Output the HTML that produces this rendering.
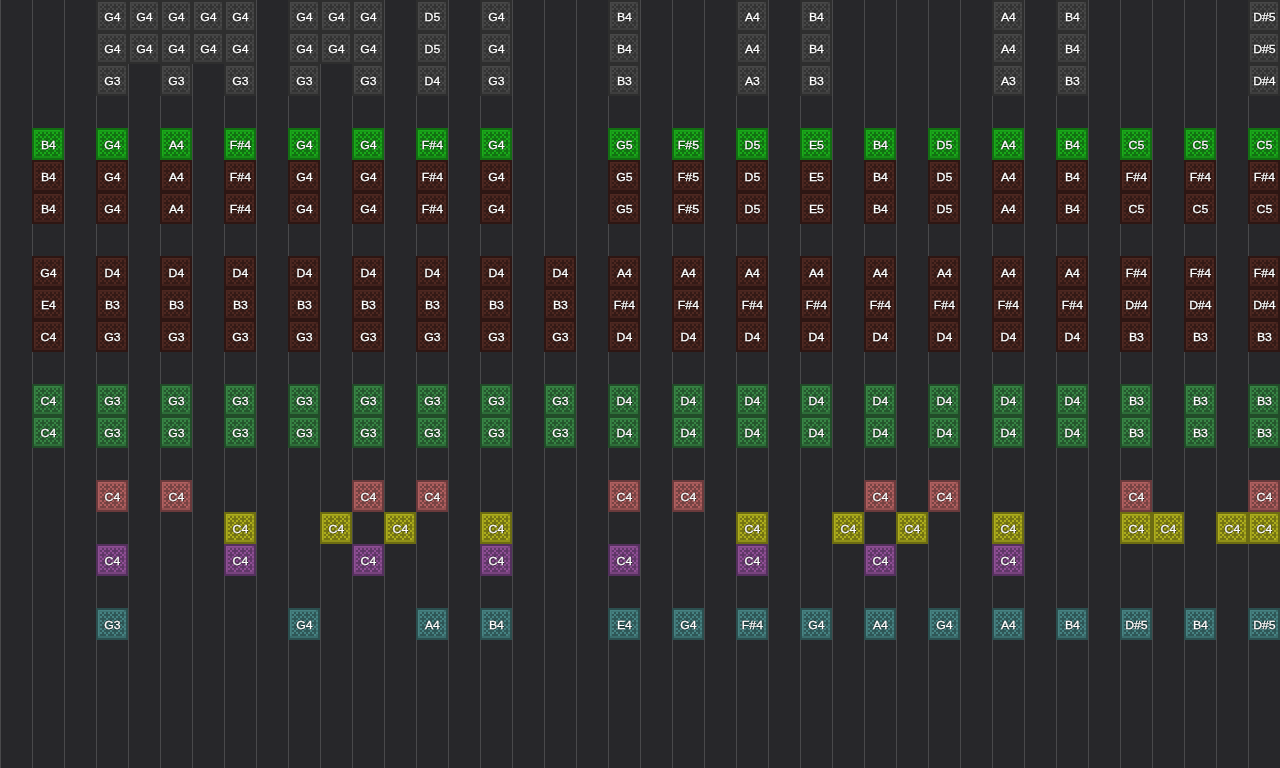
<!DOCTYPE html>
<html><head><meta charset="utf-8"><style>
html,body{margin:0;padding:0;width:1280px;height:768px;overflow:hidden;background:#27272a}
#w{position:relative;width:1280px;height:768px}
.t{position:absolute;width:32px;height:32px;line-height:32px;text-align:center;font-family:"Liberation Sans",sans-serif;font-size:11.8px;font-weight:normal;color:#fff;-webkit-text-stroke:0.3px #fff;text-shadow:0 0 1px #000,0 0 2px #000;padding-top:1px;box-sizing:border-box;transform:translate(0.4px,0.4px) scaleX(1.04);will-change:transform}
</style></head><body><div id="w">
<svg width="1280" height="768" viewBox="0 0 1280 768" shape-rendering="crispEdges" style="position:absolute;left:0;top:0"><defs><pattern id="t-gray" x="4" y="4" width="8" height="8" patternUnits="userSpaceOnUse"><rect width="8" height="8" fill="#484848"/><rect x="2" y="0" width="2" height="2" fill="#333333"/><rect x="6" y="0" width="2" height="2" fill="#333333"/><rect x="0" y="2" width="2" height="2" fill="#333333"/><rect x="4" y="2" width="2" height="2" fill="#333333"/><rect x="6" y="2" width="2" height="2" fill="#333333"/><rect x="2" y="4" width="2" height="2" fill="#333333"/><rect x="6" y="4" width="2" height="2" fill="#333333"/><rect x="0" y="6" width="2" height="2" fill="#333333"/><rect x="2" y="6" width="2" height="2" fill="#333333"/><rect x="4" y="6" width="2" height="2" fill="#333333"/></pattern><pattern id="r-gray" x="4" y="4" width="8" height="8" patternUnits="userSpaceOnUse"><rect width="8" height="8" fill="#484848"/><rect x="2" y="0" width="2" height="2" fill="#3e3e3e"/><rect x="6" y="0" width="2" height="2" fill="#3e3e3e"/><rect x="0" y="2" width="2" height="2" fill="#3e3e3e"/><rect x="4" y="2" width="2" height="2" fill="#3e3e3e"/><rect x="6" y="2" width="2" height="2" fill="#3e3e3e"/><rect x="2" y="4" width="2" height="2" fill="#3e3e3e"/><rect x="6" y="4" width="2" height="2" fill="#3e3e3e"/><rect x="0" y="6" width="2" height="2" fill="#3e3e3e"/><rect x="2" y="6" width="2" height="2" fill="#3e3e3e"/><rect x="4" y="6" width="2" height="2" fill="#3e3e3e"/></pattern><pattern id="t-green" x="4" y="4" width="8" height="8" patternUnits="userSpaceOnUse"><rect width="8" height="8" fill="#1aa91a"/><rect x="2" y="0" width="2" height="2" fill="#127212"/><rect x="6" y="0" width="2" height="2" fill="#127212"/><rect x="0" y="2" width="2" height="2" fill="#127212"/><rect x="4" y="2" width="2" height="2" fill="#127212"/><rect x="6" y="2" width="2" height="2" fill="#127212"/><rect x="2" y="4" width="2" height="2" fill="#127212"/><rect x="6" y="4" width="2" height="2" fill="#127212"/><rect x="0" y="6" width="2" height="2" fill="#127212"/><rect x="2" y="6" width="2" height="2" fill="#127212"/><rect x="4" y="6" width="2" height="2" fill="#127212"/></pattern><pattern id="r-green" x="4" y="4" width="8" height="8" patternUnits="userSpaceOnUse"><rect width="8" height="8" fill="#1aa91a"/><rect x="2" y="0" width="2" height="2" fill="#168e16"/><rect x="6" y="0" width="2" height="2" fill="#168e16"/><rect x="0" y="2" width="2" height="2" fill="#168e16"/><rect x="4" y="2" width="2" height="2" fill="#168e16"/><rect x="6" y="2" width="2" height="2" fill="#168e16"/><rect x="2" y="4" width="2" height="2" fill="#168e16"/><rect x="6" y="4" width="2" height="2" fill="#168e16"/><rect x="0" y="6" width="2" height="2" fill="#168e16"/><rect x="2" y="6" width="2" height="2" fill="#168e16"/><rect x="4" y="6" width="2" height="2" fill="#168e16"/></pattern><pattern id="t-brown" x="4" y="4" width="8" height="8" patternUnits="userSpaceOnUse"><rect width="8" height="8" fill="#4e2821"/><rect x="2" y="0" width="2" height="2" fill="#341a16"/><rect x="6" y="0" width="2" height="2" fill="#341a16"/><rect x="0" y="2" width="2" height="2" fill="#341a16"/><rect x="4" y="2" width="2" height="2" fill="#341a16"/><rect x="6" y="2" width="2" height="2" fill="#341a16"/><rect x="2" y="4" width="2" height="2" fill="#341a16"/><rect x="6" y="4" width="2" height="2" fill="#341a16"/><rect x="0" y="6" width="2" height="2" fill="#341a16"/><rect x="2" y="6" width="2" height="2" fill="#341a16"/><rect x="4" y="6" width="2" height="2" fill="#341a16"/></pattern><pattern id="r-brown" x="4" y="4" width="8" height="8" patternUnits="userSpaceOnUse"><rect width="8" height="8" fill="#4e2821"/><rect x="2" y="0" width="2" height="2" fill="#41211c"/><rect x="6" y="0" width="2" height="2" fill="#41211c"/><rect x="0" y="2" width="2" height="2" fill="#41211c"/><rect x="4" y="2" width="2" height="2" fill="#41211c"/><rect x="6" y="2" width="2" height="2" fill="#41211c"/><rect x="2" y="4" width="2" height="2" fill="#41211c"/><rect x="6" y="4" width="2" height="2" fill="#41211c"/><rect x="0" y="6" width="2" height="2" fill="#41211c"/><rect x="2" y="6" width="2" height="2" fill="#41211c"/><rect x="4" y="6" width="2" height="2" fill="#41211c"/></pattern><pattern id="t-dgreen" x="4" y="4" width="8" height="8" patternUnits="userSpaceOnUse"><rect width="8" height="8" fill="#388545"/><rect x="2" y="0" width="2" height="2" fill="#25572d"/><rect x="6" y="0" width="2" height="2" fill="#25572d"/><rect x="0" y="2" width="2" height="2" fill="#25572d"/><rect x="4" y="2" width="2" height="2" fill="#25572d"/><rect x="6" y="2" width="2" height="2" fill="#25572d"/><rect x="2" y="4" width="2" height="2" fill="#25572d"/><rect x="6" y="4" width="2" height="2" fill="#25572d"/><rect x="0" y="6" width="2" height="2" fill="#25572d"/><rect x="2" y="6" width="2" height="2" fill="#25572d"/><rect x="4" y="6" width="2" height="2" fill="#25572d"/></pattern><pattern id="r-dgreen" x="4" y="4" width="8" height="8" patternUnits="userSpaceOnUse"><rect width="8" height="8" fill="#388545"/><rect x="2" y="0" width="2" height="2" fill="#2e6e39"/><rect x="6" y="0" width="2" height="2" fill="#2e6e39"/><rect x="0" y="2" width="2" height="2" fill="#2e6e39"/><rect x="4" y="2" width="2" height="2" fill="#2e6e39"/><rect x="6" y="2" width="2" height="2" fill="#2e6e39"/><rect x="2" y="4" width="2" height="2" fill="#2e6e39"/><rect x="6" y="4" width="2" height="2" fill="#2e6e39"/><rect x="0" y="6" width="2" height="2" fill="#2e6e39"/><rect x="2" y="6" width="2" height="2" fill="#2e6e39"/><rect x="4" y="6" width="2" height="2" fill="#2e6e39"/></pattern><pattern id="t-pink" x="4" y="4" width="8" height="8" patternUnits="userSpaceOnUse"><rect width="8" height="8" fill="#b05f5f"/><rect x="2" y="0" width="2" height="2" fill="#774343"/><rect x="6" y="0" width="2" height="2" fill="#774343"/><rect x="0" y="2" width="2" height="2" fill="#774343"/><rect x="4" y="2" width="2" height="2" fill="#774343"/><rect x="6" y="2" width="2" height="2" fill="#774343"/><rect x="2" y="4" width="2" height="2" fill="#774343"/><rect x="6" y="4" width="2" height="2" fill="#774343"/><rect x="0" y="6" width="2" height="2" fill="#774343"/><rect x="2" y="6" width="2" height="2" fill="#774343"/><rect x="4" y="6" width="2" height="2" fill="#774343"/></pattern><pattern id="r-pink" x="4" y="4" width="8" height="8" patternUnits="userSpaceOnUse"><rect width="8" height="8" fill="#b05f5f"/><rect x="2" y="0" width="2" height="2" fill="#945151"/><rect x="6" y="0" width="2" height="2" fill="#945151"/><rect x="0" y="2" width="2" height="2" fill="#945151"/><rect x="4" y="2" width="2" height="2" fill="#945151"/><rect x="6" y="2" width="2" height="2" fill="#945151"/><rect x="2" y="4" width="2" height="2" fill="#945151"/><rect x="6" y="4" width="2" height="2" fill="#945151"/><rect x="0" y="6" width="2" height="2" fill="#945151"/><rect x="2" y="6" width="2" height="2" fill="#945151"/><rect x="4" y="6" width="2" height="2" fill="#945151"/></pattern><pattern id="t-yellow" x="4" y="4" width="8" height="8" patternUnits="userSpaceOnUse"><rect width="8" height="8" fill="#adad1c"/><rect x="2" y="0" width="2" height="2" fill="#757513"/><rect x="6" y="0" width="2" height="2" fill="#757513"/><rect x="0" y="2" width="2" height="2" fill="#757513"/><rect x="4" y="2" width="2" height="2" fill="#757513"/><rect x="6" y="2" width="2" height="2" fill="#757513"/><rect x="2" y="4" width="2" height="2" fill="#757513"/><rect x="6" y="4" width="2" height="2" fill="#757513"/><rect x="0" y="6" width="2" height="2" fill="#757513"/><rect x="2" y="6" width="2" height="2" fill="#757513"/><rect x="4" y="6" width="2" height="2" fill="#757513"/></pattern><pattern id="r-yellow" x="4" y="4" width="8" height="8" patternUnits="userSpaceOnUse"><rect width="8" height="8" fill="#adad1c"/><rect x="2" y="0" width="2" height="2" fill="#919118"/><rect x="6" y="0" width="2" height="2" fill="#919118"/><rect x="0" y="2" width="2" height="2" fill="#919118"/><rect x="4" y="2" width="2" height="2" fill="#919118"/><rect x="6" y="2" width="2" height="2" fill="#919118"/><rect x="2" y="4" width="2" height="2" fill="#919118"/><rect x="6" y="4" width="2" height="2" fill="#919118"/><rect x="0" y="6" width="2" height="2" fill="#919118"/><rect x="2" y="6" width="2" height="2" fill="#919118"/><rect x="4" y="6" width="2" height="2" fill="#919118"/></pattern><pattern id="t-purple" x="4" y="4" width="8" height="8" patternUnits="userSpaceOnUse"><rect width="8" height="8" fill="#8f4f95"/><rect x="2" y="0" width="2" height="2" fill="#603768"/><rect x="6" y="0" width="2" height="2" fill="#603768"/><rect x="0" y="2" width="2" height="2" fill="#603768"/><rect x="4" y="2" width="2" height="2" fill="#603768"/><rect x="6" y="2" width="2" height="2" fill="#603768"/><rect x="2" y="4" width="2" height="2" fill="#603768"/><rect x="6" y="4" width="2" height="2" fill="#603768"/><rect x="0" y="6" width="2" height="2" fill="#603768"/><rect x="2" y="6" width="2" height="2" fill="#603768"/><rect x="4" y="6" width="2" height="2" fill="#603768"/></pattern><pattern id="r-purple" x="4" y="4" width="8" height="8" patternUnits="userSpaceOnUse"><rect width="8" height="8" fill="#8f4f95"/><rect x="2" y="0" width="2" height="2" fill="#78437e"/><rect x="6" y="0" width="2" height="2" fill="#78437e"/><rect x="0" y="2" width="2" height="2" fill="#78437e"/><rect x="4" y="2" width="2" height="2" fill="#78437e"/><rect x="6" y="2" width="2" height="2" fill="#78437e"/><rect x="2" y="4" width="2" height="2" fill="#78437e"/><rect x="6" y="4" width="2" height="2" fill="#78437e"/><rect x="0" y="6" width="2" height="2" fill="#78437e"/><rect x="2" y="6" width="2" height="2" fill="#78437e"/><rect x="4" y="6" width="2" height="2" fill="#78437e"/></pattern><pattern id="t-teal" x="4" y="4" width="8" height="8" patternUnits="userSpaceOnUse"><rect width="8" height="8" fill="#468282"/><rect x="2" y="0" width="2" height="2" fill="#2f5757"/><rect x="6" y="0" width="2" height="2" fill="#2f5757"/><rect x="0" y="2" width="2" height="2" fill="#2f5757"/><rect x="4" y="2" width="2" height="2" fill="#2f5757"/><rect x="6" y="2" width="2" height="2" fill="#2f5757"/><rect x="2" y="4" width="2" height="2" fill="#2f5757"/><rect x="6" y="4" width="2" height="2" fill="#2f5757"/><rect x="0" y="6" width="2" height="2" fill="#2f5757"/><rect x="2" y="6" width="2" height="2" fill="#2f5757"/><rect x="4" y="6" width="2" height="2" fill="#2f5757"/></pattern><pattern id="r-teal" x="4" y="4" width="8" height="8" patternUnits="userSpaceOnUse"><rect width="8" height="8" fill="#468282"/><rect x="2" y="0" width="2" height="2" fill="#3a6c6c"/><rect x="6" y="0" width="2" height="2" fill="#3a6c6c"/><rect x="0" y="2" width="2" height="2" fill="#3a6c6c"/><rect x="4" y="2" width="2" height="2" fill="#3a6c6c"/><rect x="6" y="2" width="2" height="2" fill="#3a6c6c"/><rect x="2" y="4" width="2" height="2" fill="#3a6c6c"/><rect x="6" y="4" width="2" height="2" fill="#3a6c6c"/><rect x="0" y="6" width="2" height="2" fill="#3a6c6c"/><rect x="2" y="6" width="2" height="2" fill="#3a6c6c"/><rect x="4" y="6" width="2" height="2" fill="#3a6c6c"/></pattern></defs><rect width="1280" height="768" fill="#27272a"/><rect x="0" y="0" width="1" height="768" fill="#49494b"/><rect x="32" y="0" width="1" height="768" fill="#49494b"/><rect x="64" y="0" width="1" height="768" fill="#49494b"/><rect x="96" y="0" width="1" height="768" fill="#49494b"/><rect x="128" y="0" width="1" height="768" fill="#49494b"/><rect x="160" y="0" width="1" height="768" fill="#49494b"/><rect x="192" y="0" width="1" height="768" fill="#49494b"/><rect x="224" y="0" width="1" height="768" fill="#49494b"/><rect x="256" y="0" width="1" height="768" fill="#49494b"/><rect x="288" y="0" width="1" height="768" fill="#49494b"/><rect x="320" y="0" width="1" height="768" fill="#49494b"/><rect x="352" y="0" width="1" height="768" fill="#49494b"/><rect x="384" y="0" width="1" height="768" fill="#49494b"/><rect x="416" y="0" width="1" height="768" fill="#49494b"/><rect x="448" y="0" width="1" height="768" fill="#49494b"/><rect x="480" y="0" width="1" height="768" fill="#49494b"/><rect x="512" y="0" width="1" height="768" fill="#49494b"/><rect x="544" y="0" width="1" height="768" fill="#49494b"/><rect x="576" y="0" width="1" height="768" fill="#49494b"/><rect x="608" y="0" width="1" height="768" fill="#49494b"/><rect x="640" y="0" width="1" height="768" fill="#49494b"/><rect x="672" y="0" width="1" height="768" fill="#49494b"/><rect x="704" y="0" width="1" height="768" fill="#49494b"/><rect x="736" y="0" width="1" height="768" fill="#49494b"/><rect x="768" y="0" width="1" height="768" fill="#49494b"/><rect x="800" y="0" width="1" height="768" fill="#49494b"/><rect x="832" y="0" width="1" height="768" fill="#49494b"/><rect x="864" y="0" width="1" height="768" fill="#49494b"/><rect x="896" y="0" width="1" height="768" fill="#49494b"/><rect x="928" y="0" width="1" height="768" fill="#49494b"/><rect x="960" y="0" width="1" height="768" fill="#49494b"/><rect x="992" y="0" width="1" height="768" fill="#49494b"/><rect x="1024" y="0" width="1" height="768" fill="#49494b"/><rect x="1056" y="0" width="1" height="768" fill="#49494b"/><rect x="1088" y="0" width="1" height="768" fill="#49494b"/><rect x="1120" y="0" width="1" height="768" fill="#49494b"/><rect x="1152" y="0" width="1" height="768" fill="#49494b"/><rect x="1184" y="0" width="1" height="768" fill="#49494b"/><rect x="1216" y="0" width="1" height="768" fill="#49494b"/><rect x="1248" y="0" width="1" height="768" fill="#49494b"/><rect x="96" y="0" width="32" height="32" fill="#2e2e2e"/><rect x="98" y="2" width="28" height="28" fill="#3e3e3e"/><rect x="98" y="2" width="1" height="26" fill="#484848"/><rect x="98" y="2" width="26" height="1" fill="#484848"/><rect x="99" y="3" width="1" height="25" fill="#424242"/><rect x="99" y="3" width="25" height="1" fill="#424242"/><rect x="100" y="4" width="24" height="24" fill="url(#t-gray)"/><rect x="124" y="4" width="2" height="24" fill="url(#r-gray)"/><rect x="128" y="0" width="32" height="32" fill="#2e2e2e"/><rect x="130" y="2" width="28" height="28" fill="#3e3e3e"/><rect x="130" y="2" width="1" height="26" fill="#484848"/><rect x="130" y="2" width="26" height="1" fill="#484848"/><rect x="131" y="3" width="1" height="25" fill="#424242"/><rect x="131" y="3" width="25" height="1" fill="#424242"/><rect x="132" y="4" width="24" height="24" fill="url(#t-gray)"/><rect x="156" y="4" width="2" height="24" fill="url(#r-gray)"/><rect x="160" y="0" width="32" height="32" fill="#2e2e2e"/><rect x="162" y="2" width="28" height="28" fill="#3e3e3e"/><rect x="162" y="2" width="1" height="26" fill="#484848"/><rect x="162" y="2" width="26" height="1" fill="#484848"/><rect x="163" y="3" width="1" height="25" fill="#424242"/><rect x="163" y="3" width="25" height="1" fill="#424242"/><rect x="164" y="4" width="24" height="24" fill="url(#t-gray)"/><rect x="188" y="4" width="2" height="24" fill="url(#r-gray)"/><rect x="192" y="0" width="32" height="32" fill="#2e2e2e"/><rect x="194" y="2" width="28" height="28" fill="#3e3e3e"/><rect x="194" y="2" width="1" height="26" fill="#484848"/><rect x="194" y="2" width="26" height="1" fill="#484848"/><rect x="195" y="3" width="1" height="25" fill="#424242"/><rect x="195" y="3" width="25" height="1" fill="#424242"/><rect x="196" y="4" width="24" height="24" fill="url(#t-gray)"/><rect x="220" y="4" width="2" height="24" fill="url(#r-gray)"/><rect x="224" y="0" width="32" height="32" fill="#2e2e2e"/><rect x="226" y="2" width="28" height="28" fill="#3e3e3e"/><rect x="226" y="2" width="1" height="26" fill="#484848"/><rect x="226" y="2" width="26" height="1" fill="#484848"/><rect x="227" y="3" width="1" height="25" fill="#424242"/><rect x="227" y="3" width="25" height="1" fill="#424242"/><rect x="228" y="4" width="24" height="24" fill="url(#t-gray)"/><rect x="252" y="4" width="2" height="24" fill="url(#r-gray)"/><rect x="288" y="0" width="32" height="32" fill="#2e2e2e"/><rect x="290" y="2" width="28" height="28" fill="#3e3e3e"/><rect x="290" y="2" width="1" height="26" fill="#484848"/><rect x="290" y="2" width="26" height="1" fill="#484848"/><rect x="291" y="3" width="1" height="25" fill="#424242"/><rect x="291" y="3" width="25" height="1" fill="#424242"/><rect x="292" y="4" width="24" height="24" fill="url(#t-gray)"/><rect x="316" y="4" width="2" height="24" fill="url(#r-gray)"/><rect x="320" y="0" width="32" height="32" fill="#2e2e2e"/><rect x="322" y="2" width="28" height="28" fill="#3e3e3e"/><rect x="322" y="2" width="1" height="26" fill="#484848"/><rect x="322" y="2" width="26" height="1" fill="#484848"/><rect x="323" y="3" width="1" height="25" fill="#424242"/><rect x="323" y="3" width="25" height="1" fill="#424242"/><rect x="324" y="4" width="24" height="24" fill="url(#t-gray)"/><rect x="348" y="4" width="2" height="24" fill="url(#r-gray)"/><rect x="352" y="0" width="32" height="32" fill="#2e2e2e"/><rect x="354" y="2" width="28" height="28" fill="#3e3e3e"/><rect x="354" y="2" width="1" height="26" fill="#484848"/><rect x="354" y="2" width="26" height="1" fill="#484848"/><rect x="355" y="3" width="1" height="25" fill="#424242"/><rect x="355" y="3" width="25" height="1" fill="#424242"/><rect x="356" y="4" width="24" height="24" fill="url(#t-gray)"/><rect x="380" y="4" width="2" height="24" fill="url(#r-gray)"/><rect x="416" y="0" width="32" height="32" fill="#2e2e2e"/><rect x="418" y="2" width="28" height="28" fill="#3e3e3e"/><rect x="418" y="2" width="1" height="26" fill="#484848"/><rect x="418" y="2" width="26" height="1" fill="#484848"/><rect x="419" y="3" width="1" height="25" fill="#424242"/><rect x="419" y="3" width="25" height="1" fill="#424242"/><rect x="420" y="4" width="24" height="24" fill="url(#t-gray)"/><rect x="444" y="4" width="2" height="24" fill="url(#r-gray)"/><rect x="480" y="0" width="32" height="32" fill="#2e2e2e"/><rect x="482" y="2" width="28" height="28" fill="#3e3e3e"/><rect x="482" y="2" width="1" height="26" fill="#484848"/><rect x="482" y="2" width="26" height="1" fill="#484848"/><rect x="483" y="3" width="1" height="25" fill="#424242"/><rect x="483" y="3" width="25" height="1" fill="#424242"/><rect x="484" y="4" width="24" height="24" fill="url(#t-gray)"/><rect x="508" y="4" width="2" height="24" fill="url(#r-gray)"/><rect x="608" y="0" width="32" height="32" fill="#2e2e2e"/><rect x="610" y="2" width="28" height="28" fill="#3e3e3e"/><rect x="610" y="2" width="1" height="26" fill="#484848"/><rect x="610" y="2" width="26" height="1" fill="#484848"/><rect x="611" y="3" width="1" height="25" fill="#424242"/><rect x="611" y="3" width="25" height="1" fill="#424242"/><rect x="612" y="4" width="24" height="24" fill="url(#t-gray)"/><rect x="636" y="4" width="2" height="24" fill="url(#r-gray)"/><rect x="736" y="0" width="32" height="32" fill="#2e2e2e"/><rect x="738" y="2" width="28" height="28" fill="#3e3e3e"/><rect x="738" y="2" width="1" height="26" fill="#484848"/><rect x="738" y="2" width="26" height="1" fill="#484848"/><rect x="739" y="3" width="1" height="25" fill="#424242"/><rect x="739" y="3" width="25" height="1" fill="#424242"/><rect x="740" y="4" width="24" height="24" fill="url(#t-gray)"/><rect x="764" y="4" width="2" height="24" fill="url(#r-gray)"/><rect x="800" y="0" width="32" height="32" fill="#2e2e2e"/><rect x="802" y="2" width="28" height="28" fill="#3e3e3e"/><rect x="802" y="2" width="1" height="26" fill="#484848"/><rect x="802" y="2" width="26" height="1" fill="#484848"/><rect x="803" y="3" width="1" height="25" fill="#424242"/><rect x="803" y="3" width="25" height="1" fill="#424242"/><rect x="804" y="4" width="24" height="24" fill="url(#t-gray)"/><rect x="828" y="4" width="2" height="24" fill="url(#r-gray)"/><rect x="992" y="0" width="32" height="32" fill="#2e2e2e"/><rect x="994" y="2" width="28" height="28" fill="#3e3e3e"/><rect x="994" y="2" width="1" height="26" fill="#484848"/><rect x="994" y="2" width="26" height="1" fill="#484848"/><rect x="995" y="3" width="1" height="25" fill="#424242"/><rect x="995" y="3" width="25" height="1" fill="#424242"/><rect x="996" y="4" width="24" height="24" fill="url(#t-gray)"/><rect x="1020" y="4" width="2" height="24" fill="url(#r-gray)"/><rect x="1056" y="0" width="32" height="32" fill="#2e2e2e"/><rect x="1058" y="2" width="28" height="28" fill="#3e3e3e"/><rect x="1058" y="2" width="1" height="26" fill="#484848"/><rect x="1058" y="2" width="26" height="1" fill="#484848"/><rect x="1059" y="3" width="1" height="25" fill="#424242"/><rect x="1059" y="3" width="25" height="1" fill="#424242"/><rect x="1060" y="4" width="24" height="24" fill="url(#t-gray)"/><rect x="1084" y="4" width="2" height="24" fill="url(#r-gray)"/><rect x="1248" y="0" width="32" height="32" fill="#2e2e2e"/><rect x="1250" y="2" width="28" height="28" fill="#3e3e3e"/><rect x="1250" y="2" width="1" height="26" fill="#484848"/><rect x="1250" y="2" width="26" height="1" fill="#484848"/><rect x="1251" y="3" width="1" height="25" fill="#424242"/><rect x="1251" y="3" width="25" height="1" fill="#424242"/><rect x="1252" y="4" width="24" height="24" fill="url(#t-gray)"/><rect x="1276" y="4" width="2" height="24" fill="url(#r-gray)"/><rect x="96" y="32" width="32" height="32" fill="#2e2e2e"/><rect x="98" y="34" width="28" height="28" fill="#3e3e3e"/><rect x="98" y="34" width="1" height="26" fill="#484848"/><rect x="98" y="34" width="26" height="1" fill="#484848"/><rect x="99" y="35" width="1" height="25" fill="#424242"/><rect x="99" y="35" width="25" height="1" fill="#424242"/><rect x="100" y="36" width="24" height="24" fill="url(#t-gray)"/><rect x="124" y="36" width="2" height="24" fill="url(#r-gray)"/><rect x="128" y="32" width="32" height="32" fill="#2e2e2e"/><rect x="130" y="34" width="28" height="28" fill="#3e3e3e"/><rect x="130" y="34" width="1" height="26" fill="#484848"/><rect x="130" y="34" width="26" height="1" fill="#484848"/><rect x="131" y="35" width="1" height="25" fill="#424242"/><rect x="131" y="35" width="25" height="1" fill="#424242"/><rect x="132" y="36" width="24" height="24" fill="url(#t-gray)"/><rect x="156" y="36" width="2" height="24" fill="url(#r-gray)"/><rect x="160" y="32" width="32" height="32" fill="#2e2e2e"/><rect x="162" y="34" width="28" height="28" fill="#3e3e3e"/><rect x="162" y="34" width="1" height="26" fill="#484848"/><rect x="162" y="34" width="26" height="1" fill="#484848"/><rect x="163" y="35" width="1" height="25" fill="#424242"/><rect x="163" y="35" width="25" height="1" fill="#424242"/><rect x="164" y="36" width="24" height="24" fill="url(#t-gray)"/><rect x="188" y="36" width="2" height="24" fill="url(#r-gray)"/><rect x="192" y="32" width="32" height="32" fill="#2e2e2e"/><rect x="194" y="34" width="28" height="28" fill="#3e3e3e"/><rect x="194" y="34" width="1" height="26" fill="#484848"/><rect x="194" y="34" width="26" height="1" fill="#484848"/><rect x="195" y="35" width="1" height="25" fill="#424242"/><rect x="195" y="35" width="25" height="1" fill="#424242"/><rect x="196" y="36" width="24" height="24" fill="url(#t-gray)"/><rect x="220" y="36" width="2" height="24" fill="url(#r-gray)"/><rect x="224" y="32" width="32" height="32" fill="#2e2e2e"/><rect x="226" y="34" width="28" height="28" fill="#3e3e3e"/><rect x="226" y="34" width="1" height="26" fill="#484848"/><rect x="226" y="34" width="26" height="1" fill="#484848"/><rect x="227" y="35" width="1" height="25" fill="#424242"/><rect x="227" y="35" width="25" height="1" fill="#424242"/><rect x="228" y="36" width="24" height="24" fill="url(#t-gray)"/><rect x="252" y="36" width="2" height="24" fill="url(#r-gray)"/><rect x="288" y="32" width="32" height="32" fill="#2e2e2e"/><rect x="290" y="34" width="28" height="28" fill="#3e3e3e"/><rect x="290" y="34" width="1" height="26" fill="#484848"/><rect x="290" y="34" width="26" height="1" fill="#484848"/><rect x="291" y="35" width="1" height="25" fill="#424242"/><rect x="291" y="35" width="25" height="1" fill="#424242"/><rect x="292" y="36" width="24" height="24" fill="url(#t-gray)"/><rect x="316" y="36" width="2" height="24" fill="url(#r-gray)"/><rect x="320" y="32" width="32" height="32" fill="#2e2e2e"/><rect x="322" y="34" width="28" height="28" fill="#3e3e3e"/><rect x="322" y="34" width="1" height="26" fill="#484848"/><rect x="322" y="34" width="26" height="1" fill="#484848"/><rect x="323" y="35" width="1" height="25" fill="#424242"/><rect x="323" y="35" width="25" height="1" fill="#424242"/><rect x="324" y="36" width="24" height="24" fill="url(#t-gray)"/><rect x="348" y="36" width="2" height="24" fill="url(#r-gray)"/><rect x="352" y="32" width="32" height="32" fill="#2e2e2e"/><rect x="354" y="34" width="28" height="28" fill="#3e3e3e"/><rect x="354" y="34" width="1" height="26" fill="#484848"/><rect x="354" y="34" width="26" height="1" fill="#484848"/><rect x="355" y="35" width="1" height="25" fill="#424242"/><rect x="355" y="35" width="25" height="1" fill="#424242"/><rect x="356" y="36" width="24" height="24" fill="url(#t-gray)"/><rect x="380" y="36" width="2" height="24" fill="url(#r-gray)"/><rect x="416" y="32" width="32" height="32" fill="#2e2e2e"/><rect x="418" y="34" width="28" height="28" fill="#3e3e3e"/><rect x="418" y="34" width="1" height="26" fill="#484848"/><rect x="418" y="34" width="26" height="1" fill="#484848"/><rect x="419" y="35" width="1" height="25" fill="#424242"/><rect x="419" y="35" width="25" height="1" fill="#424242"/><rect x="420" y="36" width="24" height="24" fill="url(#t-gray)"/><rect x="444" y="36" width="2" height="24" fill="url(#r-gray)"/><rect x="480" y="32" width="32" height="32" fill="#2e2e2e"/><rect x="482" y="34" width="28" height="28" fill="#3e3e3e"/><rect x="482" y="34" width="1" height="26" fill="#484848"/><rect x="482" y="34" width="26" height="1" fill="#484848"/><rect x="483" y="35" width="1" height="25" fill="#424242"/><rect x="483" y="35" width="25" height="1" fill="#424242"/><rect x="484" y="36" width="24" height="24" fill="url(#t-gray)"/><rect x="508" y="36" width="2" height="24" fill="url(#r-gray)"/><rect x="608" y="32" width="32" height="32" fill="#2e2e2e"/><rect x="610" y="34" width="28" height="28" fill="#3e3e3e"/><rect x="610" y="34" width="1" height="26" fill="#484848"/><rect x="610" y="34" width="26" height="1" fill="#484848"/><rect x="611" y="35" width="1" height="25" fill="#424242"/><rect x="611" y="35" width="25" height="1" fill="#424242"/><rect x="612" y="36" width="24" height="24" fill="url(#t-gray)"/><rect x="636" y="36" width="2" height="24" fill="url(#r-gray)"/><rect x="736" y="32" width="32" height="32" fill="#2e2e2e"/><rect x="738" y="34" width="28" height="28" fill="#3e3e3e"/><rect x="738" y="34" width="1" height="26" fill="#484848"/><rect x="738" y="34" width="26" height="1" fill="#484848"/><rect x="739" y="35" width="1" height="25" fill="#424242"/><rect x="739" y="35" width="25" height="1" fill="#424242"/><rect x="740" y="36" width="24" height="24" fill="url(#t-gray)"/><rect x="764" y="36" width="2" height="24" fill="url(#r-gray)"/><rect x="800" y="32" width="32" height="32" fill="#2e2e2e"/><rect x="802" y="34" width="28" height="28" fill="#3e3e3e"/><rect x="802" y="34" width="1" height="26" fill="#484848"/><rect x="802" y="34" width="26" height="1" fill="#484848"/><rect x="803" y="35" width="1" height="25" fill="#424242"/><rect x="803" y="35" width="25" height="1" fill="#424242"/><rect x="804" y="36" width="24" height="24" fill="url(#t-gray)"/><rect x="828" y="36" width="2" height="24" fill="url(#r-gray)"/><rect x="992" y="32" width="32" height="32" fill="#2e2e2e"/><rect x="994" y="34" width="28" height="28" fill="#3e3e3e"/><rect x="994" y="34" width="1" height="26" fill="#484848"/><rect x="994" y="34" width="26" height="1" fill="#484848"/><rect x="995" y="35" width="1" height="25" fill="#424242"/><rect x="995" y="35" width="25" height="1" fill="#424242"/><rect x="996" y="36" width="24" height="24" fill="url(#t-gray)"/><rect x="1020" y="36" width="2" height="24" fill="url(#r-gray)"/><rect x="1056" y="32" width="32" height="32" fill="#2e2e2e"/><rect x="1058" y="34" width="28" height="28" fill="#3e3e3e"/><rect x="1058" y="34" width="1" height="26" fill="#484848"/><rect x="1058" y="34" width="26" height="1" fill="#484848"/><rect x="1059" y="35" width="1" height="25" fill="#424242"/><rect x="1059" y="35" width="25" height="1" fill="#424242"/><rect x="1060" y="36" width="24" height="24" fill="url(#t-gray)"/><rect x="1084" y="36" width="2" height="24" fill="url(#r-gray)"/><rect x="1248" y="32" width="32" height="32" fill="#2e2e2e"/><rect x="1250" y="34" width="28" height="28" fill="#3e3e3e"/><rect x="1250" y="34" width="1" height="26" fill="#484848"/><rect x="1250" y="34" width="26" height="1" fill="#484848"/><rect x="1251" y="35" width="1" height="25" fill="#424242"/><rect x="1251" y="35" width="25" height="1" fill="#424242"/><rect x="1252" y="36" width="24" height="24" fill="url(#t-gray)"/><rect x="1276" y="36" width="2" height="24" fill="url(#r-gray)"/><rect x="96" y="64" width="32" height="32" fill="#2e2e2e"/><rect x="98" y="66" width="28" height="28" fill="#3e3e3e"/><rect x="98" y="66" width="1" height="26" fill="#484848"/><rect x="98" y="66" width="26" height="1" fill="#484848"/><rect x="99" y="67" width="1" height="25" fill="#424242"/><rect x="99" y="67" width="25" height="1" fill="#424242"/><rect x="100" y="68" width="24" height="24" fill="url(#t-gray)"/><rect x="124" y="68" width="2" height="24" fill="url(#r-gray)"/><rect x="160" y="64" width="32" height="32" fill="#2e2e2e"/><rect x="162" y="66" width="28" height="28" fill="#3e3e3e"/><rect x="162" y="66" width="1" height="26" fill="#484848"/><rect x="162" y="66" width="26" height="1" fill="#484848"/><rect x="163" y="67" width="1" height="25" fill="#424242"/><rect x="163" y="67" width="25" height="1" fill="#424242"/><rect x="164" y="68" width="24" height="24" fill="url(#t-gray)"/><rect x="188" y="68" width="2" height="24" fill="url(#r-gray)"/><rect x="224" y="64" width="32" height="32" fill="#2e2e2e"/><rect x="226" y="66" width="28" height="28" fill="#3e3e3e"/><rect x="226" y="66" width="1" height="26" fill="#484848"/><rect x="226" y="66" width="26" height="1" fill="#484848"/><rect x="227" y="67" width="1" height="25" fill="#424242"/><rect x="227" y="67" width="25" height="1" fill="#424242"/><rect x="228" y="68" width="24" height="24" fill="url(#t-gray)"/><rect x="252" y="68" width="2" height="24" fill="url(#r-gray)"/><rect x="288" y="64" width="32" height="32" fill="#2e2e2e"/><rect x="290" y="66" width="28" height="28" fill="#3e3e3e"/><rect x="290" y="66" width="1" height="26" fill="#484848"/><rect x="290" y="66" width="26" height="1" fill="#484848"/><rect x="291" y="67" width="1" height="25" fill="#424242"/><rect x="291" y="67" width="25" height="1" fill="#424242"/><rect x="292" y="68" width="24" height="24" fill="url(#t-gray)"/><rect x="316" y="68" width="2" height="24" fill="url(#r-gray)"/><rect x="352" y="64" width="32" height="32" fill="#2e2e2e"/><rect x="354" y="66" width="28" height="28" fill="#3e3e3e"/><rect x="354" y="66" width="1" height="26" fill="#484848"/><rect x="354" y="66" width="26" height="1" fill="#484848"/><rect x="355" y="67" width="1" height="25" fill="#424242"/><rect x="355" y="67" width="25" height="1" fill="#424242"/><rect x="356" y="68" width="24" height="24" fill="url(#t-gray)"/><rect x="380" y="68" width="2" height="24" fill="url(#r-gray)"/><rect x="416" y="64" width="32" height="32" fill="#2e2e2e"/><rect x="418" y="66" width="28" height="28" fill="#3e3e3e"/><rect x="418" y="66" width="1" height="26" fill="#484848"/><rect x="418" y="66" width="26" height="1" fill="#484848"/><rect x="419" y="67" width="1" height="25" fill="#424242"/><rect x="419" y="67" width="25" height="1" fill="#424242"/><rect x="420" y="68" width="24" height="24" fill="url(#t-gray)"/><rect x="444" y="68" width="2" height="24" fill="url(#r-gray)"/><rect x="480" y="64" width="32" height="32" fill="#2e2e2e"/><rect x="482" y="66" width="28" height="28" fill="#3e3e3e"/><rect x="482" y="66" width="1" height="26" fill="#484848"/><rect x="482" y="66" width="26" height="1" fill="#484848"/><rect x="483" y="67" width="1" height="25" fill="#424242"/><rect x="483" y="67" width="25" height="1" fill="#424242"/><rect x="484" y="68" width="24" height="24" fill="url(#t-gray)"/><rect x="508" y="68" width="2" height="24" fill="url(#r-gray)"/><rect x="608" y="64" width="32" height="32" fill="#2e2e2e"/><rect x="610" y="66" width="28" height="28" fill="#3e3e3e"/><rect x="610" y="66" width="1" height="26" fill="#484848"/><rect x="610" y="66" width="26" height="1" fill="#484848"/><rect x="611" y="67" width="1" height="25" fill="#424242"/><rect x="611" y="67" width="25" height="1" fill="#424242"/><rect x="612" y="68" width="24" height="24" fill="url(#t-gray)"/><rect x="636" y="68" width="2" height="24" fill="url(#r-gray)"/><rect x="736" y="64" width="32" height="32" fill="#2e2e2e"/><rect x="738" y="66" width="28" height="28" fill="#3e3e3e"/><rect x="738" y="66" width="1" height="26" fill="#484848"/><rect x="738" y="66" width="26" height="1" fill="#484848"/><rect x="739" y="67" width="1" height="25" fill="#424242"/><rect x="739" y="67" width="25" height="1" fill="#424242"/><rect x="740" y="68" width="24" height="24" fill="url(#t-gray)"/><rect x="764" y="68" width="2" height="24" fill="url(#r-gray)"/><rect x="800" y="64" width="32" height="32" fill="#2e2e2e"/><rect x="802" y="66" width="28" height="28" fill="#3e3e3e"/><rect x="802" y="66" width="1" height="26" fill="#484848"/><rect x="802" y="66" width="26" height="1" fill="#484848"/><rect x="803" y="67" width="1" height="25" fill="#424242"/><rect x="803" y="67" width="25" height="1" fill="#424242"/><rect x="804" y="68" width="24" height="24" fill="url(#t-gray)"/><rect x="828" y="68" width="2" height="24" fill="url(#r-gray)"/><rect x="992" y="64" width="32" height="32" fill="#2e2e2e"/><rect x="994" y="66" width="28" height="28" fill="#3e3e3e"/><rect x="994" y="66" width="1" height="26" fill="#484848"/><rect x="994" y="66" width="26" height="1" fill="#484848"/><rect x="995" y="67" width="1" height="25" fill="#424242"/><rect x="995" y="67" width="25" height="1" fill="#424242"/><rect x="996" y="68" width="24" height="24" fill="url(#t-gray)"/><rect x="1020" y="68" width="2" height="24" fill="url(#r-gray)"/><rect x="1056" y="64" width="32" height="32" fill="#2e2e2e"/><rect x="1058" y="66" width="28" height="28" fill="#3e3e3e"/><rect x="1058" y="66" width="1" height="26" fill="#484848"/><rect x="1058" y="66" width="26" height="1" fill="#484848"/><rect x="1059" y="67" width="1" height="25" fill="#424242"/><rect x="1059" y="67" width="25" height="1" fill="#424242"/><rect x="1060" y="68" width="24" height="24" fill="url(#t-gray)"/><rect x="1084" y="68" width="2" height="24" fill="url(#r-gray)"/><rect x="1248" y="64" width="32" height="32" fill="#2e2e2e"/><rect x="1250" y="66" width="28" height="28" fill="#3e3e3e"/><rect x="1250" y="66" width="1" height="26" fill="#484848"/><rect x="1250" y="66" width="26" height="1" fill="#484848"/><rect x="1251" y="67" width="1" height="25" fill="#424242"/><rect x="1251" y="67" width="25" height="1" fill="#424242"/><rect x="1252" y="68" width="24" height="24" fill="url(#t-gray)"/><rect x="1276" y="68" width="2" height="24" fill="url(#r-gray)"/><rect x="32" y="128" width="32" height="32" fill="#126e12"/><rect x="34" y="130" width="28" height="28" fill="#168e16"/><rect x="34" y="130" width="1" height="26" fill="#1aa91a"/><rect x="34" y="130" width="26" height="1" fill="#1aa91a"/><rect x="35" y="131" width="1" height="25" fill="#189918"/><rect x="35" y="131" width="25" height="1" fill="#189918"/><rect x="36" y="132" width="24" height="24" fill="url(#t-green)"/><rect x="60" y="132" width="2" height="24" fill="url(#r-green)"/><rect x="96" y="128" width="32" height="32" fill="#126e12"/><rect x="98" y="130" width="28" height="28" fill="#168e16"/><rect x="98" y="130" width="1" height="26" fill="#1aa91a"/><rect x="98" y="130" width="26" height="1" fill="#1aa91a"/><rect x="99" y="131" width="1" height="25" fill="#189918"/><rect x="99" y="131" width="25" height="1" fill="#189918"/><rect x="100" y="132" width="24" height="24" fill="url(#t-green)"/><rect x="124" y="132" width="2" height="24" fill="url(#r-green)"/><rect x="160" y="128" width="32" height="32" fill="#126e12"/><rect x="162" y="130" width="28" height="28" fill="#168e16"/><rect x="162" y="130" width="1" height="26" fill="#1aa91a"/><rect x="162" y="130" width="26" height="1" fill="#1aa91a"/><rect x="163" y="131" width="1" height="25" fill="#189918"/><rect x="163" y="131" width="25" height="1" fill="#189918"/><rect x="164" y="132" width="24" height="24" fill="url(#t-green)"/><rect x="188" y="132" width="2" height="24" fill="url(#r-green)"/><rect x="224" y="128" width="32" height="32" fill="#126e12"/><rect x="226" y="130" width="28" height="28" fill="#168e16"/><rect x="226" y="130" width="1" height="26" fill="#1aa91a"/><rect x="226" y="130" width="26" height="1" fill="#1aa91a"/><rect x="227" y="131" width="1" height="25" fill="#189918"/><rect x="227" y="131" width="25" height="1" fill="#189918"/><rect x="228" y="132" width="24" height="24" fill="url(#t-green)"/><rect x="252" y="132" width="2" height="24" fill="url(#r-green)"/><rect x="288" y="128" width="32" height="32" fill="#126e12"/><rect x="290" y="130" width="28" height="28" fill="#168e16"/><rect x="290" y="130" width="1" height="26" fill="#1aa91a"/><rect x="290" y="130" width="26" height="1" fill="#1aa91a"/><rect x="291" y="131" width="1" height="25" fill="#189918"/><rect x="291" y="131" width="25" height="1" fill="#189918"/><rect x="292" y="132" width="24" height="24" fill="url(#t-green)"/><rect x="316" y="132" width="2" height="24" fill="url(#r-green)"/><rect x="352" y="128" width="32" height="32" fill="#126e12"/><rect x="354" y="130" width="28" height="28" fill="#168e16"/><rect x="354" y="130" width="1" height="26" fill="#1aa91a"/><rect x="354" y="130" width="26" height="1" fill="#1aa91a"/><rect x="355" y="131" width="1" height="25" fill="#189918"/><rect x="355" y="131" width="25" height="1" fill="#189918"/><rect x="356" y="132" width="24" height="24" fill="url(#t-green)"/><rect x="380" y="132" width="2" height="24" fill="url(#r-green)"/><rect x="416" y="128" width="32" height="32" fill="#126e12"/><rect x="418" y="130" width="28" height="28" fill="#168e16"/><rect x="418" y="130" width="1" height="26" fill="#1aa91a"/><rect x="418" y="130" width="26" height="1" fill="#1aa91a"/><rect x="419" y="131" width="1" height="25" fill="#189918"/><rect x="419" y="131" width="25" height="1" fill="#189918"/><rect x="420" y="132" width="24" height="24" fill="url(#t-green)"/><rect x="444" y="132" width="2" height="24" fill="url(#r-green)"/><rect x="480" y="128" width="32" height="32" fill="#126e12"/><rect x="482" y="130" width="28" height="28" fill="#168e16"/><rect x="482" y="130" width="1" height="26" fill="#1aa91a"/><rect x="482" y="130" width="26" height="1" fill="#1aa91a"/><rect x="483" y="131" width="1" height="25" fill="#189918"/><rect x="483" y="131" width="25" height="1" fill="#189918"/><rect x="484" y="132" width="24" height="24" fill="url(#t-green)"/><rect x="508" y="132" width="2" height="24" fill="url(#r-green)"/><rect x="608" y="128" width="32" height="32" fill="#126e12"/><rect x="610" y="130" width="28" height="28" fill="#168e16"/><rect x="610" y="130" width="1" height="26" fill="#1aa91a"/><rect x="610" y="130" width="26" height="1" fill="#1aa91a"/><rect x="611" y="131" width="1" height="25" fill="#189918"/><rect x="611" y="131" width="25" height="1" fill="#189918"/><rect x="612" y="132" width="24" height="24" fill="url(#t-green)"/><rect x="636" y="132" width="2" height="24" fill="url(#r-green)"/><rect x="672" y="128" width="32" height="32" fill="#126e12"/><rect x="674" y="130" width="28" height="28" fill="#168e16"/><rect x="674" y="130" width="1" height="26" fill="#1aa91a"/><rect x="674" y="130" width="26" height="1" fill="#1aa91a"/><rect x="675" y="131" width="1" height="25" fill="#189918"/><rect x="675" y="131" width="25" height="1" fill="#189918"/><rect x="676" y="132" width="24" height="24" fill="url(#t-green)"/><rect x="700" y="132" width="2" height="24" fill="url(#r-green)"/><rect x="736" y="128" width="32" height="32" fill="#126e12"/><rect x="738" y="130" width="28" height="28" fill="#168e16"/><rect x="738" y="130" width="1" height="26" fill="#1aa91a"/><rect x="738" y="130" width="26" height="1" fill="#1aa91a"/><rect x="739" y="131" width="1" height="25" fill="#189918"/><rect x="739" y="131" width="25" height="1" fill="#189918"/><rect x="740" y="132" width="24" height="24" fill="url(#t-green)"/><rect x="764" y="132" width="2" height="24" fill="url(#r-green)"/><rect x="800" y="128" width="32" height="32" fill="#126e12"/><rect x="802" y="130" width="28" height="28" fill="#168e16"/><rect x="802" y="130" width="1" height="26" fill="#1aa91a"/><rect x="802" y="130" width="26" height="1" fill="#1aa91a"/><rect x="803" y="131" width="1" height="25" fill="#189918"/><rect x="803" y="131" width="25" height="1" fill="#189918"/><rect x="804" y="132" width="24" height="24" fill="url(#t-green)"/><rect x="828" y="132" width="2" height="24" fill="url(#r-green)"/><rect x="864" y="128" width="32" height="32" fill="#126e12"/><rect x="866" y="130" width="28" height="28" fill="#168e16"/><rect x="866" y="130" width="1" height="26" fill="#1aa91a"/><rect x="866" y="130" width="26" height="1" fill="#1aa91a"/><rect x="867" y="131" width="1" height="25" fill="#189918"/><rect x="867" y="131" width="25" height="1" fill="#189918"/><rect x="868" y="132" width="24" height="24" fill="url(#t-green)"/><rect x="892" y="132" width="2" height="24" fill="url(#r-green)"/><rect x="928" y="128" width="32" height="32" fill="#126e12"/><rect x="930" y="130" width="28" height="28" fill="#168e16"/><rect x="930" y="130" width="1" height="26" fill="#1aa91a"/><rect x="930" y="130" width="26" height="1" fill="#1aa91a"/><rect x="931" y="131" width="1" height="25" fill="#189918"/><rect x="931" y="131" width="25" height="1" fill="#189918"/><rect x="932" y="132" width="24" height="24" fill="url(#t-green)"/><rect x="956" y="132" width="2" height="24" fill="url(#r-green)"/><rect x="992" y="128" width="32" height="32" fill="#126e12"/><rect x="994" y="130" width="28" height="28" fill="#168e16"/><rect x="994" y="130" width="1" height="26" fill="#1aa91a"/><rect x="994" y="130" width="26" height="1" fill="#1aa91a"/><rect x="995" y="131" width="1" height="25" fill="#189918"/><rect x="995" y="131" width="25" height="1" fill="#189918"/><rect x="996" y="132" width="24" height="24" fill="url(#t-green)"/><rect x="1020" y="132" width="2" height="24" fill="url(#r-green)"/><rect x="1056" y="128" width="32" height="32" fill="#126e12"/><rect x="1058" y="130" width="28" height="28" fill="#168e16"/><rect x="1058" y="130" width="1" height="26" fill="#1aa91a"/><rect x="1058" y="130" width="26" height="1" fill="#1aa91a"/><rect x="1059" y="131" width="1" height="25" fill="#189918"/><rect x="1059" y="131" width="25" height="1" fill="#189918"/><rect x="1060" y="132" width="24" height="24" fill="url(#t-green)"/><rect x="1084" y="132" width="2" height="24" fill="url(#r-green)"/><rect x="1120" y="128" width="32" height="32" fill="#126e12"/><rect x="1122" y="130" width="28" height="28" fill="#168e16"/><rect x="1122" y="130" width="1" height="26" fill="#1aa91a"/><rect x="1122" y="130" width="26" height="1" fill="#1aa91a"/><rect x="1123" y="131" width="1" height="25" fill="#189918"/><rect x="1123" y="131" width="25" height="1" fill="#189918"/><rect x="1124" y="132" width="24" height="24" fill="url(#t-green)"/><rect x="1148" y="132" width="2" height="24" fill="url(#r-green)"/><rect x="1184" y="128" width="32" height="32" fill="#126e12"/><rect x="1186" y="130" width="28" height="28" fill="#168e16"/><rect x="1186" y="130" width="1" height="26" fill="#1aa91a"/><rect x="1186" y="130" width="26" height="1" fill="#1aa91a"/><rect x="1187" y="131" width="1" height="25" fill="#189918"/><rect x="1187" y="131" width="25" height="1" fill="#189918"/><rect x="1188" y="132" width="24" height="24" fill="url(#t-green)"/><rect x="1212" y="132" width="2" height="24" fill="url(#r-green)"/><rect x="1248" y="128" width="32" height="32" fill="#126e12"/><rect x="1250" y="130" width="28" height="28" fill="#168e16"/><rect x="1250" y="130" width="1" height="26" fill="#1aa91a"/><rect x="1250" y="130" width="26" height="1" fill="#1aa91a"/><rect x="1251" y="131" width="1" height="25" fill="#189918"/><rect x="1251" y="131" width="25" height="1" fill="#189918"/><rect x="1252" y="132" width="24" height="24" fill="url(#t-green)"/><rect x="1276" y="132" width="2" height="24" fill="url(#r-green)"/><rect x="32" y="160" width="32" height="32" fill="#2d1613"/><rect x="34" y="162" width="28" height="28" fill="#41211c"/><rect x="34" y="162" width="1" height="26" fill="#4e2821"/><rect x="34" y="162" width="26" height="1" fill="#4e2821"/><rect x="35" y="163" width="1" height="25" fill="#46241e"/><rect x="35" y="163" width="25" height="1" fill="#46241e"/><rect x="36" y="164" width="24" height="24" fill="url(#t-brown)"/><rect x="60" y="164" width="2" height="24" fill="url(#r-brown)"/><rect x="96" y="160" width="32" height="32" fill="#2d1613"/><rect x="98" y="162" width="28" height="28" fill="#41211c"/><rect x="98" y="162" width="1" height="26" fill="#4e2821"/><rect x="98" y="162" width="26" height="1" fill="#4e2821"/><rect x="99" y="163" width="1" height="25" fill="#46241e"/><rect x="99" y="163" width="25" height="1" fill="#46241e"/><rect x="100" y="164" width="24" height="24" fill="url(#t-brown)"/><rect x="124" y="164" width="2" height="24" fill="url(#r-brown)"/><rect x="160" y="160" width="32" height="32" fill="#2d1613"/><rect x="162" y="162" width="28" height="28" fill="#41211c"/><rect x="162" y="162" width="1" height="26" fill="#4e2821"/><rect x="162" y="162" width="26" height="1" fill="#4e2821"/><rect x="163" y="163" width="1" height="25" fill="#46241e"/><rect x="163" y="163" width="25" height="1" fill="#46241e"/><rect x="164" y="164" width="24" height="24" fill="url(#t-brown)"/><rect x="188" y="164" width="2" height="24" fill="url(#r-brown)"/><rect x="224" y="160" width="32" height="32" fill="#2d1613"/><rect x="226" y="162" width="28" height="28" fill="#41211c"/><rect x="226" y="162" width="1" height="26" fill="#4e2821"/><rect x="226" y="162" width="26" height="1" fill="#4e2821"/><rect x="227" y="163" width="1" height="25" fill="#46241e"/><rect x="227" y="163" width="25" height="1" fill="#46241e"/><rect x="228" y="164" width="24" height="24" fill="url(#t-brown)"/><rect x="252" y="164" width="2" height="24" fill="url(#r-brown)"/><rect x="288" y="160" width="32" height="32" fill="#2d1613"/><rect x="290" y="162" width="28" height="28" fill="#41211c"/><rect x="290" y="162" width="1" height="26" fill="#4e2821"/><rect x="290" y="162" width="26" height="1" fill="#4e2821"/><rect x="291" y="163" width="1" height="25" fill="#46241e"/><rect x="291" y="163" width="25" height="1" fill="#46241e"/><rect x="292" y="164" width="24" height="24" fill="url(#t-brown)"/><rect x="316" y="164" width="2" height="24" fill="url(#r-brown)"/><rect x="352" y="160" width="32" height="32" fill="#2d1613"/><rect x="354" y="162" width="28" height="28" fill="#41211c"/><rect x="354" y="162" width="1" height="26" fill="#4e2821"/><rect x="354" y="162" width="26" height="1" fill="#4e2821"/><rect x="355" y="163" width="1" height="25" fill="#46241e"/><rect x="355" y="163" width="25" height="1" fill="#46241e"/><rect x="356" y="164" width="24" height="24" fill="url(#t-brown)"/><rect x="380" y="164" width="2" height="24" fill="url(#r-brown)"/><rect x="416" y="160" width="32" height="32" fill="#2d1613"/><rect x="418" y="162" width="28" height="28" fill="#41211c"/><rect x="418" y="162" width="1" height="26" fill="#4e2821"/><rect x="418" y="162" width="26" height="1" fill="#4e2821"/><rect x="419" y="163" width="1" height="25" fill="#46241e"/><rect x="419" y="163" width="25" height="1" fill="#46241e"/><rect x="420" y="164" width="24" height="24" fill="url(#t-brown)"/><rect x="444" y="164" width="2" height="24" fill="url(#r-brown)"/><rect x="480" y="160" width="32" height="32" fill="#2d1613"/><rect x="482" y="162" width="28" height="28" fill="#41211c"/><rect x="482" y="162" width="1" height="26" fill="#4e2821"/><rect x="482" y="162" width="26" height="1" fill="#4e2821"/><rect x="483" y="163" width="1" height="25" fill="#46241e"/><rect x="483" y="163" width="25" height="1" fill="#46241e"/><rect x="484" y="164" width="24" height="24" fill="url(#t-brown)"/><rect x="508" y="164" width="2" height="24" fill="url(#r-brown)"/><rect x="608" y="160" width="32" height="32" fill="#2d1613"/><rect x="610" y="162" width="28" height="28" fill="#41211c"/><rect x="610" y="162" width="1" height="26" fill="#4e2821"/><rect x="610" y="162" width="26" height="1" fill="#4e2821"/><rect x="611" y="163" width="1" height="25" fill="#46241e"/><rect x="611" y="163" width="25" height="1" fill="#46241e"/><rect x="612" y="164" width="24" height="24" fill="url(#t-brown)"/><rect x="636" y="164" width="2" height="24" fill="url(#r-brown)"/><rect x="672" y="160" width="32" height="32" fill="#2d1613"/><rect x="674" y="162" width="28" height="28" fill="#41211c"/><rect x="674" y="162" width="1" height="26" fill="#4e2821"/><rect x="674" y="162" width="26" height="1" fill="#4e2821"/><rect x="675" y="163" width="1" height="25" fill="#46241e"/><rect x="675" y="163" width="25" height="1" fill="#46241e"/><rect x="676" y="164" width="24" height="24" fill="url(#t-brown)"/><rect x="700" y="164" width="2" height="24" fill="url(#r-brown)"/><rect x="736" y="160" width="32" height="32" fill="#2d1613"/><rect x="738" y="162" width="28" height="28" fill="#41211c"/><rect x="738" y="162" width="1" height="26" fill="#4e2821"/><rect x="738" y="162" width="26" height="1" fill="#4e2821"/><rect x="739" y="163" width="1" height="25" fill="#46241e"/><rect x="739" y="163" width="25" height="1" fill="#46241e"/><rect x="740" y="164" width="24" height="24" fill="url(#t-brown)"/><rect x="764" y="164" width="2" height="24" fill="url(#r-brown)"/><rect x="800" y="160" width="32" height="32" fill="#2d1613"/><rect x="802" y="162" width="28" height="28" fill="#41211c"/><rect x="802" y="162" width="1" height="26" fill="#4e2821"/><rect x="802" y="162" width="26" height="1" fill="#4e2821"/><rect x="803" y="163" width="1" height="25" fill="#46241e"/><rect x="803" y="163" width="25" height="1" fill="#46241e"/><rect x="804" y="164" width="24" height="24" fill="url(#t-brown)"/><rect x="828" y="164" width="2" height="24" fill="url(#r-brown)"/><rect x="864" y="160" width="32" height="32" fill="#2d1613"/><rect x="866" y="162" width="28" height="28" fill="#41211c"/><rect x="866" y="162" width="1" height="26" fill="#4e2821"/><rect x="866" y="162" width="26" height="1" fill="#4e2821"/><rect x="867" y="163" width="1" height="25" fill="#46241e"/><rect x="867" y="163" width="25" height="1" fill="#46241e"/><rect x="868" y="164" width="24" height="24" fill="url(#t-brown)"/><rect x="892" y="164" width="2" height="24" fill="url(#r-brown)"/><rect x="928" y="160" width="32" height="32" fill="#2d1613"/><rect x="930" y="162" width="28" height="28" fill="#41211c"/><rect x="930" y="162" width="1" height="26" fill="#4e2821"/><rect x="930" y="162" width="26" height="1" fill="#4e2821"/><rect x="931" y="163" width="1" height="25" fill="#46241e"/><rect x="931" y="163" width="25" height="1" fill="#46241e"/><rect x="932" y="164" width="24" height="24" fill="url(#t-brown)"/><rect x="956" y="164" width="2" height="24" fill="url(#r-brown)"/><rect x="992" y="160" width="32" height="32" fill="#2d1613"/><rect x="994" y="162" width="28" height="28" fill="#41211c"/><rect x="994" y="162" width="1" height="26" fill="#4e2821"/><rect x="994" y="162" width="26" height="1" fill="#4e2821"/><rect x="995" y="163" width="1" height="25" fill="#46241e"/><rect x="995" y="163" width="25" height="1" fill="#46241e"/><rect x="996" y="164" width="24" height="24" fill="url(#t-brown)"/><rect x="1020" y="164" width="2" height="24" fill="url(#r-brown)"/><rect x="1056" y="160" width="32" height="32" fill="#2d1613"/><rect x="1058" y="162" width="28" height="28" fill="#41211c"/><rect x="1058" y="162" width="1" height="26" fill="#4e2821"/><rect x="1058" y="162" width="26" height="1" fill="#4e2821"/><rect x="1059" y="163" width="1" height="25" fill="#46241e"/><rect x="1059" y="163" width="25" height="1" fill="#46241e"/><rect x="1060" y="164" width="24" height="24" fill="url(#t-brown)"/><rect x="1084" y="164" width="2" height="24" fill="url(#r-brown)"/><rect x="1120" y="160" width="32" height="32" fill="#2d1613"/><rect x="1122" y="162" width="28" height="28" fill="#41211c"/><rect x="1122" y="162" width="1" height="26" fill="#4e2821"/><rect x="1122" y="162" width="26" height="1" fill="#4e2821"/><rect x="1123" y="163" width="1" height="25" fill="#46241e"/><rect x="1123" y="163" width="25" height="1" fill="#46241e"/><rect x="1124" y="164" width="24" height="24" fill="url(#t-brown)"/><rect x="1148" y="164" width="2" height="24" fill="url(#r-brown)"/><rect x="1184" y="160" width="32" height="32" fill="#2d1613"/><rect x="1186" y="162" width="28" height="28" fill="#41211c"/><rect x="1186" y="162" width="1" height="26" fill="#4e2821"/><rect x="1186" y="162" width="26" height="1" fill="#4e2821"/><rect x="1187" y="163" width="1" height="25" fill="#46241e"/><rect x="1187" y="163" width="25" height="1" fill="#46241e"/><rect x="1188" y="164" width="24" height="24" fill="url(#t-brown)"/><rect x="1212" y="164" width="2" height="24" fill="url(#r-brown)"/><rect x="1248" y="160" width="32" height="32" fill="#2d1613"/><rect x="1250" y="162" width="28" height="28" fill="#41211c"/><rect x="1250" y="162" width="1" height="26" fill="#4e2821"/><rect x="1250" y="162" width="26" height="1" fill="#4e2821"/><rect x="1251" y="163" width="1" height="25" fill="#46241e"/><rect x="1251" y="163" width="25" height="1" fill="#46241e"/><rect x="1252" y="164" width="24" height="24" fill="url(#t-brown)"/><rect x="1276" y="164" width="2" height="24" fill="url(#r-brown)"/><rect x="32" y="192" width="32" height="32" fill="#2d1613"/><rect x="34" y="194" width="28" height="28" fill="#41211c"/><rect x="34" y="194" width="1" height="26" fill="#4e2821"/><rect x="34" y="194" width="26" height="1" fill="#4e2821"/><rect x="35" y="195" width="1" height="25" fill="#46241e"/><rect x="35" y="195" width="25" height="1" fill="#46241e"/><rect x="36" y="196" width="24" height="24" fill="url(#t-brown)"/><rect x="60" y="196" width="2" height="24" fill="url(#r-brown)"/><rect x="96" y="192" width="32" height="32" fill="#2d1613"/><rect x="98" y="194" width="28" height="28" fill="#41211c"/><rect x="98" y="194" width="1" height="26" fill="#4e2821"/><rect x="98" y="194" width="26" height="1" fill="#4e2821"/><rect x="99" y="195" width="1" height="25" fill="#46241e"/><rect x="99" y="195" width="25" height="1" fill="#46241e"/><rect x="100" y="196" width="24" height="24" fill="url(#t-brown)"/><rect x="124" y="196" width="2" height="24" fill="url(#r-brown)"/><rect x="160" y="192" width="32" height="32" fill="#2d1613"/><rect x="162" y="194" width="28" height="28" fill="#41211c"/><rect x="162" y="194" width="1" height="26" fill="#4e2821"/><rect x="162" y="194" width="26" height="1" fill="#4e2821"/><rect x="163" y="195" width="1" height="25" fill="#46241e"/><rect x="163" y="195" width="25" height="1" fill="#46241e"/><rect x="164" y="196" width="24" height="24" fill="url(#t-brown)"/><rect x="188" y="196" width="2" height="24" fill="url(#r-brown)"/><rect x="224" y="192" width="32" height="32" fill="#2d1613"/><rect x="226" y="194" width="28" height="28" fill="#41211c"/><rect x="226" y="194" width="1" height="26" fill="#4e2821"/><rect x="226" y="194" width="26" height="1" fill="#4e2821"/><rect x="227" y="195" width="1" height="25" fill="#46241e"/><rect x="227" y="195" width="25" height="1" fill="#46241e"/><rect x="228" y="196" width="24" height="24" fill="url(#t-brown)"/><rect x="252" y="196" width="2" height="24" fill="url(#r-brown)"/><rect x="288" y="192" width="32" height="32" fill="#2d1613"/><rect x="290" y="194" width="28" height="28" fill="#41211c"/><rect x="290" y="194" width="1" height="26" fill="#4e2821"/><rect x="290" y="194" width="26" height="1" fill="#4e2821"/><rect x="291" y="195" width="1" height="25" fill="#46241e"/><rect x="291" y="195" width="25" height="1" fill="#46241e"/><rect x="292" y="196" width="24" height="24" fill="url(#t-brown)"/><rect x="316" y="196" width="2" height="24" fill="url(#r-brown)"/><rect x="352" y="192" width="32" height="32" fill="#2d1613"/><rect x="354" y="194" width="28" height="28" fill="#41211c"/><rect x="354" y="194" width="1" height="26" fill="#4e2821"/><rect x="354" y="194" width="26" height="1" fill="#4e2821"/><rect x="355" y="195" width="1" height="25" fill="#46241e"/><rect x="355" y="195" width="25" height="1" fill="#46241e"/><rect x="356" y="196" width="24" height="24" fill="url(#t-brown)"/><rect x="380" y="196" width="2" height="24" fill="url(#r-brown)"/><rect x="416" y="192" width="32" height="32" fill="#2d1613"/><rect x="418" y="194" width="28" height="28" fill="#41211c"/><rect x="418" y="194" width="1" height="26" fill="#4e2821"/><rect x="418" y="194" width="26" height="1" fill="#4e2821"/><rect x="419" y="195" width="1" height="25" fill="#46241e"/><rect x="419" y="195" width="25" height="1" fill="#46241e"/><rect x="420" y="196" width="24" height="24" fill="url(#t-brown)"/><rect x="444" y="196" width="2" height="24" fill="url(#r-brown)"/><rect x="480" y="192" width="32" height="32" fill="#2d1613"/><rect x="482" y="194" width="28" height="28" fill="#41211c"/><rect x="482" y="194" width="1" height="26" fill="#4e2821"/><rect x="482" y="194" width="26" height="1" fill="#4e2821"/><rect x="483" y="195" width="1" height="25" fill="#46241e"/><rect x="483" y="195" width="25" height="1" fill="#46241e"/><rect x="484" y="196" width="24" height="24" fill="url(#t-brown)"/><rect x="508" y="196" width="2" height="24" fill="url(#r-brown)"/><rect x="608" y="192" width="32" height="32" fill="#2d1613"/><rect x="610" y="194" width="28" height="28" fill="#41211c"/><rect x="610" y="194" width="1" height="26" fill="#4e2821"/><rect x="610" y="194" width="26" height="1" fill="#4e2821"/><rect x="611" y="195" width="1" height="25" fill="#46241e"/><rect x="611" y="195" width="25" height="1" fill="#46241e"/><rect x="612" y="196" width="24" height="24" fill="url(#t-brown)"/><rect x="636" y="196" width="2" height="24" fill="url(#r-brown)"/><rect x="672" y="192" width="32" height="32" fill="#2d1613"/><rect x="674" y="194" width="28" height="28" fill="#41211c"/><rect x="674" y="194" width="1" height="26" fill="#4e2821"/><rect x="674" y="194" width="26" height="1" fill="#4e2821"/><rect x="675" y="195" width="1" height="25" fill="#46241e"/><rect x="675" y="195" width="25" height="1" fill="#46241e"/><rect x="676" y="196" width="24" height="24" fill="url(#t-brown)"/><rect x="700" y="196" width="2" height="24" fill="url(#r-brown)"/><rect x="736" y="192" width="32" height="32" fill="#2d1613"/><rect x="738" y="194" width="28" height="28" fill="#41211c"/><rect x="738" y="194" width="1" height="26" fill="#4e2821"/><rect x="738" y="194" width="26" height="1" fill="#4e2821"/><rect x="739" y="195" width="1" height="25" fill="#46241e"/><rect x="739" y="195" width="25" height="1" fill="#46241e"/><rect x="740" y="196" width="24" height="24" fill="url(#t-brown)"/><rect x="764" y="196" width="2" height="24" fill="url(#r-brown)"/><rect x="800" y="192" width="32" height="32" fill="#2d1613"/><rect x="802" y="194" width="28" height="28" fill="#41211c"/><rect x="802" y="194" width="1" height="26" fill="#4e2821"/><rect x="802" y="194" width="26" height="1" fill="#4e2821"/><rect x="803" y="195" width="1" height="25" fill="#46241e"/><rect x="803" y="195" width="25" height="1" fill="#46241e"/><rect x="804" y="196" width="24" height="24" fill="url(#t-brown)"/><rect x="828" y="196" width="2" height="24" fill="url(#r-brown)"/><rect x="864" y="192" width="32" height="32" fill="#2d1613"/><rect x="866" y="194" width="28" height="28" fill="#41211c"/><rect x="866" y="194" width="1" height="26" fill="#4e2821"/><rect x="866" y="194" width="26" height="1" fill="#4e2821"/><rect x="867" y="195" width="1" height="25" fill="#46241e"/><rect x="867" y="195" width="25" height="1" fill="#46241e"/><rect x="868" y="196" width="24" height="24" fill="url(#t-brown)"/><rect x="892" y="196" width="2" height="24" fill="url(#r-brown)"/><rect x="928" y="192" width="32" height="32" fill="#2d1613"/><rect x="930" y="194" width="28" height="28" fill="#41211c"/><rect x="930" y="194" width="1" height="26" fill="#4e2821"/><rect x="930" y="194" width="26" height="1" fill="#4e2821"/><rect x="931" y="195" width="1" height="25" fill="#46241e"/><rect x="931" y="195" width="25" height="1" fill="#46241e"/><rect x="932" y="196" width="24" height="24" fill="url(#t-brown)"/><rect x="956" y="196" width="2" height="24" fill="url(#r-brown)"/><rect x="992" y="192" width="32" height="32" fill="#2d1613"/><rect x="994" y="194" width="28" height="28" fill="#41211c"/><rect x="994" y="194" width="1" height="26" fill="#4e2821"/><rect x="994" y="194" width="26" height="1" fill="#4e2821"/><rect x="995" y="195" width="1" height="25" fill="#46241e"/><rect x="995" y="195" width="25" height="1" fill="#46241e"/><rect x="996" y="196" width="24" height="24" fill="url(#t-brown)"/><rect x="1020" y="196" width="2" height="24" fill="url(#r-brown)"/><rect x="1056" y="192" width="32" height="32" fill="#2d1613"/><rect x="1058" y="194" width="28" height="28" fill="#41211c"/><rect x="1058" y="194" width="1" height="26" fill="#4e2821"/><rect x="1058" y="194" width="26" height="1" fill="#4e2821"/><rect x="1059" y="195" width="1" height="25" fill="#46241e"/><rect x="1059" y="195" width="25" height="1" fill="#46241e"/><rect x="1060" y="196" width="24" height="24" fill="url(#t-brown)"/><rect x="1084" y="196" width="2" height="24" fill="url(#r-brown)"/><rect x="1120" y="192" width="32" height="32" fill="#2d1613"/><rect x="1122" y="194" width="28" height="28" fill="#41211c"/><rect x="1122" y="194" width="1" height="26" fill="#4e2821"/><rect x="1122" y="194" width="26" height="1" fill="#4e2821"/><rect x="1123" y="195" width="1" height="25" fill="#46241e"/><rect x="1123" y="195" width="25" height="1" fill="#46241e"/><rect x="1124" y="196" width="24" height="24" fill="url(#t-brown)"/><rect x="1148" y="196" width="2" height="24" fill="url(#r-brown)"/><rect x="1184" y="192" width="32" height="32" fill="#2d1613"/><rect x="1186" y="194" width="28" height="28" fill="#41211c"/><rect x="1186" y="194" width="1" height="26" fill="#4e2821"/><rect x="1186" y="194" width="26" height="1" fill="#4e2821"/><rect x="1187" y="195" width="1" height="25" fill="#46241e"/><rect x="1187" y="195" width="25" height="1" fill="#46241e"/><rect x="1188" y="196" width="24" height="24" fill="url(#t-brown)"/><rect x="1212" y="196" width="2" height="24" fill="url(#r-brown)"/><rect x="1248" y="192" width="32" height="32" fill="#2d1613"/><rect x="1250" y="194" width="28" height="28" fill="#41211c"/><rect x="1250" y="194" width="1" height="26" fill="#4e2821"/><rect x="1250" y="194" width="26" height="1" fill="#4e2821"/><rect x="1251" y="195" width="1" height="25" fill="#46241e"/><rect x="1251" y="195" width="25" height="1" fill="#46241e"/><rect x="1252" y="196" width="24" height="24" fill="url(#t-brown)"/><rect x="1276" y="196" width="2" height="24" fill="url(#r-brown)"/><rect x="32" y="256" width="32" height="32" fill="#2d1613"/><rect x="34" y="258" width="28" height="28" fill="#41211c"/><rect x="34" y="258" width="1" height="26" fill="#4e2821"/><rect x="34" y="258" width="26" height="1" fill="#4e2821"/><rect x="35" y="259" width="1" height="25" fill="#46241e"/><rect x="35" y="259" width="25" height="1" fill="#46241e"/><rect x="36" y="260" width="24" height="24" fill="url(#t-brown)"/><rect x="60" y="260" width="2" height="24" fill="url(#r-brown)"/><rect x="96" y="256" width="32" height="32" fill="#2d1613"/><rect x="98" y="258" width="28" height="28" fill="#41211c"/><rect x="98" y="258" width="1" height="26" fill="#4e2821"/><rect x="98" y="258" width="26" height="1" fill="#4e2821"/><rect x="99" y="259" width="1" height="25" fill="#46241e"/><rect x="99" y="259" width="25" height="1" fill="#46241e"/><rect x="100" y="260" width="24" height="24" fill="url(#t-brown)"/><rect x="124" y="260" width="2" height="24" fill="url(#r-brown)"/><rect x="160" y="256" width="32" height="32" fill="#2d1613"/><rect x="162" y="258" width="28" height="28" fill="#41211c"/><rect x="162" y="258" width="1" height="26" fill="#4e2821"/><rect x="162" y="258" width="26" height="1" fill="#4e2821"/><rect x="163" y="259" width="1" height="25" fill="#46241e"/><rect x="163" y="259" width="25" height="1" fill="#46241e"/><rect x="164" y="260" width="24" height="24" fill="url(#t-brown)"/><rect x="188" y="260" width="2" height="24" fill="url(#r-brown)"/><rect x="224" y="256" width="32" height="32" fill="#2d1613"/><rect x="226" y="258" width="28" height="28" fill="#41211c"/><rect x="226" y="258" width="1" height="26" fill="#4e2821"/><rect x="226" y="258" width="26" height="1" fill="#4e2821"/><rect x="227" y="259" width="1" height="25" fill="#46241e"/><rect x="227" y="259" width="25" height="1" fill="#46241e"/><rect x="228" y="260" width="24" height="24" fill="url(#t-brown)"/><rect x="252" y="260" width="2" height="24" fill="url(#r-brown)"/><rect x="288" y="256" width="32" height="32" fill="#2d1613"/><rect x="290" y="258" width="28" height="28" fill="#41211c"/><rect x="290" y="258" width="1" height="26" fill="#4e2821"/><rect x="290" y="258" width="26" height="1" fill="#4e2821"/><rect x="291" y="259" width="1" height="25" fill="#46241e"/><rect x="291" y="259" width="25" height="1" fill="#46241e"/><rect x="292" y="260" width="24" height="24" fill="url(#t-brown)"/><rect x="316" y="260" width="2" height="24" fill="url(#r-brown)"/><rect x="352" y="256" width="32" height="32" fill="#2d1613"/><rect x="354" y="258" width="28" height="28" fill="#41211c"/><rect x="354" y="258" width="1" height="26" fill="#4e2821"/><rect x="354" y="258" width="26" height="1" fill="#4e2821"/><rect x="355" y="259" width="1" height="25" fill="#46241e"/><rect x="355" y="259" width="25" height="1" fill="#46241e"/><rect x="356" y="260" width="24" height="24" fill="url(#t-brown)"/><rect x="380" y="260" width="2" height="24" fill="url(#r-brown)"/><rect x="416" y="256" width="32" height="32" fill="#2d1613"/><rect x="418" y="258" width="28" height="28" fill="#41211c"/><rect x="418" y="258" width="1" height="26" fill="#4e2821"/><rect x="418" y="258" width="26" height="1" fill="#4e2821"/><rect x="419" y="259" width="1" height="25" fill="#46241e"/><rect x="419" y="259" width="25" height="1" fill="#46241e"/><rect x="420" y="260" width="24" height="24" fill="url(#t-brown)"/><rect x="444" y="260" width="2" height="24" fill="url(#r-brown)"/><rect x="480" y="256" width="32" height="32" fill="#2d1613"/><rect x="482" y="258" width="28" height="28" fill="#41211c"/><rect x="482" y="258" width="1" height="26" fill="#4e2821"/><rect x="482" y="258" width="26" height="1" fill="#4e2821"/><rect x="483" y="259" width="1" height="25" fill="#46241e"/><rect x="483" y="259" width="25" height="1" fill="#46241e"/><rect x="484" y="260" width="24" height="24" fill="url(#t-brown)"/><rect x="508" y="260" width="2" height="24" fill="url(#r-brown)"/><rect x="544" y="256" width="32" height="32" fill="#2d1613"/><rect x="546" y="258" width="28" height="28" fill="#41211c"/><rect x="546" y="258" width="1" height="26" fill="#4e2821"/><rect x="546" y="258" width="26" height="1" fill="#4e2821"/><rect x="547" y="259" width="1" height="25" fill="#46241e"/><rect x="547" y="259" width="25" height="1" fill="#46241e"/><rect x="548" y="260" width="24" height="24" fill="url(#t-brown)"/><rect x="572" y="260" width="2" height="24" fill="url(#r-brown)"/><rect x="608" y="256" width="32" height="32" fill="#2d1613"/><rect x="610" y="258" width="28" height="28" fill="#41211c"/><rect x="610" y="258" width="1" height="26" fill="#4e2821"/><rect x="610" y="258" width="26" height="1" fill="#4e2821"/><rect x="611" y="259" width="1" height="25" fill="#46241e"/><rect x="611" y="259" width="25" height="1" fill="#46241e"/><rect x="612" y="260" width="24" height="24" fill="url(#t-brown)"/><rect x="636" y="260" width="2" height="24" fill="url(#r-brown)"/><rect x="672" y="256" width="32" height="32" fill="#2d1613"/><rect x="674" y="258" width="28" height="28" fill="#41211c"/><rect x="674" y="258" width="1" height="26" fill="#4e2821"/><rect x="674" y="258" width="26" height="1" fill="#4e2821"/><rect x="675" y="259" width="1" height="25" fill="#46241e"/><rect x="675" y="259" width="25" height="1" fill="#46241e"/><rect x="676" y="260" width="24" height="24" fill="url(#t-brown)"/><rect x="700" y="260" width="2" height="24" fill="url(#r-brown)"/><rect x="736" y="256" width="32" height="32" fill="#2d1613"/><rect x="738" y="258" width="28" height="28" fill="#41211c"/><rect x="738" y="258" width="1" height="26" fill="#4e2821"/><rect x="738" y="258" width="26" height="1" fill="#4e2821"/><rect x="739" y="259" width="1" height="25" fill="#46241e"/><rect x="739" y="259" width="25" height="1" fill="#46241e"/><rect x="740" y="260" width="24" height="24" fill="url(#t-brown)"/><rect x="764" y="260" width="2" height="24" fill="url(#r-brown)"/><rect x="800" y="256" width="32" height="32" fill="#2d1613"/><rect x="802" y="258" width="28" height="28" fill="#41211c"/><rect x="802" y="258" width="1" height="26" fill="#4e2821"/><rect x="802" y="258" width="26" height="1" fill="#4e2821"/><rect x="803" y="259" width="1" height="25" fill="#46241e"/><rect x="803" y="259" width="25" height="1" fill="#46241e"/><rect x="804" y="260" width="24" height="24" fill="url(#t-brown)"/><rect x="828" y="260" width="2" height="24" fill="url(#r-brown)"/><rect x="864" y="256" width="32" height="32" fill="#2d1613"/><rect x="866" y="258" width="28" height="28" fill="#41211c"/><rect x="866" y="258" width="1" height="26" fill="#4e2821"/><rect x="866" y="258" width="26" height="1" fill="#4e2821"/><rect x="867" y="259" width="1" height="25" fill="#46241e"/><rect x="867" y="259" width="25" height="1" fill="#46241e"/><rect x="868" y="260" width="24" height="24" fill="url(#t-brown)"/><rect x="892" y="260" width="2" height="24" fill="url(#r-brown)"/><rect x="928" y="256" width="32" height="32" fill="#2d1613"/><rect x="930" y="258" width="28" height="28" fill="#41211c"/><rect x="930" y="258" width="1" height="26" fill="#4e2821"/><rect x="930" y="258" width="26" height="1" fill="#4e2821"/><rect x="931" y="259" width="1" height="25" fill="#46241e"/><rect x="931" y="259" width="25" height="1" fill="#46241e"/><rect x="932" y="260" width="24" height="24" fill="url(#t-brown)"/><rect x="956" y="260" width="2" height="24" fill="url(#r-brown)"/><rect x="992" y="256" width="32" height="32" fill="#2d1613"/><rect x="994" y="258" width="28" height="28" fill="#41211c"/><rect x="994" y="258" width="1" height="26" fill="#4e2821"/><rect x="994" y="258" width="26" height="1" fill="#4e2821"/><rect x="995" y="259" width="1" height="25" fill="#46241e"/><rect x="995" y="259" width="25" height="1" fill="#46241e"/><rect x="996" y="260" width="24" height="24" fill="url(#t-brown)"/><rect x="1020" y="260" width="2" height="24" fill="url(#r-brown)"/><rect x="1056" y="256" width="32" height="32" fill="#2d1613"/><rect x="1058" y="258" width="28" height="28" fill="#41211c"/><rect x="1058" y="258" width="1" height="26" fill="#4e2821"/><rect x="1058" y="258" width="26" height="1" fill="#4e2821"/><rect x="1059" y="259" width="1" height="25" fill="#46241e"/><rect x="1059" y="259" width="25" height="1" fill="#46241e"/><rect x="1060" y="260" width="24" height="24" fill="url(#t-brown)"/><rect x="1084" y="260" width="2" height="24" fill="url(#r-brown)"/><rect x="1120" y="256" width="32" height="32" fill="#2d1613"/><rect x="1122" y="258" width="28" height="28" fill="#41211c"/><rect x="1122" y="258" width="1" height="26" fill="#4e2821"/><rect x="1122" y="258" width="26" height="1" fill="#4e2821"/><rect x="1123" y="259" width="1" height="25" fill="#46241e"/><rect x="1123" y="259" width="25" height="1" fill="#46241e"/><rect x="1124" y="260" width="24" height="24" fill="url(#t-brown)"/><rect x="1148" y="260" width="2" height="24" fill="url(#r-brown)"/><rect x="1184" y="256" width="32" height="32" fill="#2d1613"/><rect x="1186" y="258" width="28" height="28" fill="#41211c"/><rect x="1186" y="258" width="1" height="26" fill="#4e2821"/><rect x="1186" y="258" width="26" height="1" fill="#4e2821"/><rect x="1187" y="259" width="1" height="25" fill="#46241e"/><rect x="1187" y="259" width="25" height="1" fill="#46241e"/><rect x="1188" y="260" width="24" height="24" fill="url(#t-brown)"/><rect x="1212" y="260" width="2" height="24" fill="url(#r-brown)"/><rect x="1248" y="256" width="32" height="32" fill="#2d1613"/><rect x="1250" y="258" width="28" height="28" fill="#41211c"/><rect x="1250" y="258" width="1" height="26" fill="#4e2821"/><rect x="1250" y="258" width="26" height="1" fill="#4e2821"/><rect x="1251" y="259" width="1" height="25" fill="#46241e"/><rect x="1251" y="259" width="25" height="1" fill="#46241e"/><rect x="1252" y="260" width="24" height="24" fill="url(#t-brown)"/><rect x="1276" y="260" width="2" height="24" fill="url(#r-brown)"/><rect x="32" y="288" width="32" height="32" fill="#2d1613"/><rect x="34" y="290" width="28" height="28" fill="#41211c"/><rect x="34" y="290" width="1" height="26" fill="#4e2821"/><rect x="34" y="290" width="26" height="1" fill="#4e2821"/><rect x="35" y="291" width="1" height="25" fill="#46241e"/><rect x="35" y="291" width="25" height="1" fill="#46241e"/><rect x="36" y="292" width="24" height="24" fill="url(#t-brown)"/><rect x="60" y="292" width="2" height="24" fill="url(#r-brown)"/><rect x="96" y="288" width="32" height="32" fill="#2d1613"/><rect x="98" y="290" width="28" height="28" fill="#41211c"/><rect x="98" y="290" width="1" height="26" fill="#4e2821"/><rect x="98" y="290" width="26" height="1" fill="#4e2821"/><rect x="99" y="291" width="1" height="25" fill="#46241e"/><rect x="99" y="291" width="25" height="1" fill="#46241e"/><rect x="100" y="292" width="24" height="24" fill="url(#t-brown)"/><rect x="124" y="292" width="2" height="24" fill="url(#r-brown)"/><rect x="160" y="288" width="32" height="32" fill="#2d1613"/><rect x="162" y="290" width="28" height="28" fill="#41211c"/><rect x="162" y="290" width="1" height="26" fill="#4e2821"/><rect x="162" y="290" width="26" height="1" fill="#4e2821"/><rect x="163" y="291" width="1" height="25" fill="#46241e"/><rect x="163" y="291" width="25" height="1" fill="#46241e"/><rect x="164" y="292" width="24" height="24" fill="url(#t-brown)"/><rect x="188" y="292" width="2" height="24" fill="url(#r-brown)"/><rect x="224" y="288" width="32" height="32" fill="#2d1613"/><rect x="226" y="290" width="28" height="28" fill="#41211c"/><rect x="226" y="290" width="1" height="26" fill="#4e2821"/><rect x="226" y="290" width="26" height="1" fill="#4e2821"/><rect x="227" y="291" width="1" height="25" fill="#46241e"/><rect x="227" y="291" width="25" height="1" fill="#46241e"/><rect x="228" y="292" width="24" height="24" fill="url(#t-brown)"/><rect x="252" y="292" width="2" height="24" fill="url(#r-brown)"/><rect x="288" y="288" width="32" height="32" fill="#2d1613"/><rect x="290" y="290" width="28" height="28" fill="#41211c"/><rect x="290" y="290" width="1" height="26" fill="#4e2821"/><rect x="290" y="290" width="26" height="1" fill="#4e2821"/><rect x="291" y="291" width="1" height="25" fill="#46241e"/><rect x="291" y="291" width="25" height="1" fill="#46241e"/><rect x="292" y="292" width="24" height="24" fill="url(#t-brown)"/><rect x="316" y="292" width="2" height="24" fill="url(#r-brown)"/><rect x="352" y="288" width="32" height="32" fill="#2d1613"/><rect x="354" y="290" width="28" height="28" fill="#41211c"/><rect x="354" y="290" width="1" height="26" fill="#4e2821"/><rect x="354" y="290" width="26" height="1" fill="#4e2821"/><rect x="355" y="291" width="1" height="25" fill="#46241e"/><rect x="355" y="291" width="25" height="1" fill="#46241e"/><rect x="356" y="292" width="24" height="24" fill="url(#t-brown)"/><rect x="380" y="292" width="2" height="24" fill="url(#r-brown)"/><rect x="416" y="288" width="32" height="32" fill="#2d1613"/><rect x="418" y="290" width="28" height="28" fill="#41211c"/><rect x="418" y="290" width="1" height="26" fill="#4e2821"/><rect x="418" y="290" width="26" height="1" fill="#4e2821"/><rect x="419" y="291" width="1" height="25" fill="#46241e"/><rect x="419" y="291" width="25" height="1" fill="#46241e"/><rect x="420" y="292" width="24" height="24" fill="url(#t-brown)"/><rect x="444" y="292" width="2" height="24" fill="url(#r-brown)"/><rect x="480" y="288" width="32" height="32" fill="#2d1613"/><rect x="482" y="290" width="28" height="28" fill="#41211c"/><rect x="482" y="290" width="1" height="26" fill="#4e2821"/><rect x="482" y="290" width="26" height="1" fill="#4e2821"/><rect x="483" y="291" width="1" height="25" fill="#46241e"/><rect x="483" y="291" width="25" height="1" fill="#46241e"/><rect x="484" y="292" width="24" height="24" fill="url(#t-brown)"/><rect x="508" y="292" width="2" height="24" fill="url(#r-brown)"/><rect x="544" y="288" width="32" height="32" fill="#2d1613"/><rect x="546" y="290" width="28" height="28" fill="#41211c"/><rect x="546" y="290" width="1" height="26" fill="#4e2821"/><rect x="546" y="290" width="26" height="1" fill="#4e2821"/><rect x="547" y="291" width="1" height="25" fill="#46241e"/><rect x="547" y="291" width="25" height="1" fill="#46241e"/><rect x="548" y="292" width="24" height="24" fill="url(#t-brown)"/><rect x="572" y="292" width="2" height="24" fill="url(#r-brown)"/><rect x="608" y="288" width="32" height="32" fill="#2d1613"/><rect x="610" y="290" width="28" height="28" fill="#41211c"/><rect x="610" y="290" width="1" height="26" fill="#4e2821"/><rect x="610" y="290" width="26" height="1" fill="#4e2821"/><rect x="611" y="291" width="1" height="25" fill="#46241e"/><rect x="611" y="291" width="25" height="1" fill="#46241e"/><rect x="612" y="292" width="24" height="24" fill="url(#t-brown)"/><rect x="636" y="292" width="2" height="24" fill="url(#r-brown)"/><rect x="672" y="288" width="32" height="32" fill="#2d1613"/><rect x="674" y="290" width="28" height="28" fill="#41211c"/><rect x="674" y="290" width="1" height="26" fill="#4e2821"/><rect x="674" y="290" width="26" height="1" fill="#4e2821"/><rect x="675" y="291" width="1" height="25" fill="#46241e"/><rect x="675" y="291" width="25" height="1" fill="#46241e"/><rect x="676" y="292" width="24" height="24" fill="url(#t-brown)"/><rect x="700" y="292" width="2" height="24" fill="url(#r-brown)"/><rect x="736" y="288" width="32" height="32" fill="#2d1613"/><rect x="738" y="290" width="28" height="28" fill="#41211c"/><rect x="738" y="290" width="1" height="26" fill="#4e2821"/><rect x="738" y="290" width="26" height="1" fill="#4e2821"/><rect x="739" y="291" width="1" height="25" fill="#46241e"/><rect x="739" y="291" width="25" height="1" fill="#46241e"/><rect x="740" y="292" width="24" height="24" fill="url(#t-brown)"/><rect x="764" y="292" width="2" height="24" fill="url(#r-brown)"/><rect x="800" y="288" width="32" height="32" fill="#2d1613"/><rect x="802" y="290" width="28" height="28" fill="#41211c"/><rect x="802" y="290" width="1" height="26" fill="#4e2821"/><rect x="802" y="290" width="26" height="1" fill="#4e2821"/><rect x="803" y="291" width="1" height="25" fill="#46241e"/><rect x="803" y="291" width="25" height="1" fill="#46241e"/><rect x="804" y="292" width="24" height="24" fill="url(#t-brown)"/><rect x="828" y="292" width="2" height="24" fill="url(#r-brown)"/><rect x="864" y="288" width="32" height="32" fill="#2d1613"/><rect x="866" y="290" width="28" height="28" fill="#41211c"/><rect x="866" y="290" width="1" height="26" fill="#4e2821"/><rect x="866" y="290" width="26" height="1" fill="#4e2821"/><rect x="867" y="291" width="1" height="25" fill="#46241e"/><rect x="867" y="291" width="25" height="1" fill="#46241e"/><rect x="868" y="292" width="24" height="24" fill="url(#t-brown)"/><rect x="892" y="292" width="2" height="24" fill="url(#r-brown)"/><rect x="928" y="288" width="32" height="32" fill="#2d1613"/><rect x="930" y="290" width="28" height="28" fill="#41211c"/><rect x="930" y="290" width="1" height="26" fill="#4e2821"/><rect x="930" y="290" width="26" height="1" fill="#4e2821"/><rect x="931" y="291" width="1" height="25" fill="#46241e"/><rect x="931" y="291" width="25" height="1" fill="#46241e"/><rect x="932" y="292" width="24" height="24" fill="url(#t-brown)"/><rect x="956" y="292" width="2" height="24" fill="url(#r-brown)"/><rect x="992" y="288" width="32" height="32" fill="#2d1613"/><rect x="994" y="290" width="28" height="28" fill="#41211c"/><rect x="994" y="290" width="1" height="26" fill="#4e2821"/><rect x="994" y="290" width="26" height="1" fill="#4e2821"/><rect x="995" y="291" width="1" height="25" fill="#46241e"/><rect x="995" y="291" width="25" height="1" fill="#46241e"/><rect x="996" y="292" width="24" height="24" fill="url(#t-brown)"/><rect x="1020" y="292" width="2" height="24" fill="url(#r-brown)"/><rect x="1056" y="288" width="32" height="32" fill="#2d1613"/><rect x="1058" y="290" width="28" height="28" fill="#41211c"/><rect x="1058" y="290" width="1" height="26" fill="#4e2821"/><rect x="1058" y="290" width="26" height="1" fill="#4e2821"/><rect x="1059" y="291" width="1" height="25" fill="#46241e"/><rect x="1059" y="291" width="25" height="1" fill="#46241e"/><rect x="1060" y="292" width="24" height="24" fill="url(#t-brown)"/><rect x="1084" y="292" width="2" height="24" fill="url(#r-brown)"/><rect x="1120" y="288" width="32" height="32" fill="#2d1613"/><rect x="1122" y="290" width="28" height="28" fill="#41211c"/><rect x="1122" y="290" width="1" height="26" fill="#4e2821"/><rect x="1122" y="290" width="26" height="1" fill="#4e2821"/><rect x="1123" y="291" width="1" height="25" fill="#46241e"/><rect x="1123" y="291" width="25" height="1" fill="#46241e"/><rect x="1124" y="292" width="24" height="24" fill="url(#t-brown)"/><rect x="1148" y="292" width="2" height="24" fill="url(#r-brown)"/><rect x="1184" y="288" width="32" height="32" fill="#2d1613"/><rect x="1186" y="290" width="28" height="28" fill="#41211c"/><rect x="1186" y="290" width="1" height="26" fill="#4e2821"/><rect x="1186" y="290" width="26" height="1" fill="#4e2821"/><rect x="1187" y="291" width="1" height="25" fill="#46241e"/><rect x="1187" y="291" width="25" height="1" fill="#46241e"/><rect x="1188" y="292" width="24" height="24" fill="url(#t-brown)"/><rect x="1212" y="292" width="2" height="24" fill="url(#r-brown)"/><rect x="1248" y="288" width="32" height="32" fill="#2d1613"/><rect x="1250" y="290" width="28" height="28" fill="#41211c"/><rect x="1250" y="290" width="1" height="26" fill="#4e2821"/><rect x="1250" y="290" width="26" height="1" fill="#4e2821"/><rect x="1251" y="291" width="1" height="25" fill="#46241e"/><rect x="1251" y="291" width="25" height="1" fill="#46241e"/><rect x="1252" y="292" width="24" height="24" fill="url(#t-brown)"/><rect x="1276" y="292" width="2" height="24" fill="url(#r-brown)"/><rect x="32" y="320" width="32" height="32" fill="#2d1613"/><rect x="34" y="322" width="28" height="28" fill="#41211c"/><rect x="34" y="322" width="1" height="26" fill="#4e2821"/><rect x="34" y="322" width="26" height="1" fill="#4e2821"/><rect x="35" y="323" width="1" height="25" fill="#46241e"/><rect x="35" y="323" width="25" height="1" fill="#46241e"/><rect x="36" y="324" width="24" height="24" fill="url(#t-brown)"/><rect x="60" y="324" width="2" height="24" fill="url(#r-brown)"/><rect x="96" y="320" width="32" height="32" fill="#2d1613"/><rect x="98" y="322" width="28" height="28" fill="#41211c"/><rect x="98" y="322" width="1" height="26" fill="#4e2821"/><rect x="98" y="322" width="26" height="1" fill="#4e2821"/><rect x="99" y="323" width="1" height="25" fill="#46241e"/><rect x="99" y="323" width="25" height="1" fill="#46241e"/><rect x="100" y="324" width="24" height="24" fill="url(#t-brown)"/><rect x="124" y="324" width="2" height="24" fill="url(#r-brown)"/><rect x="160" y="320" width="32" height="32" fill="#2d1613"/><rect x="162" y="322" width="28" height="28" fill="#41211c"/><rect x="162" y="322" width="1" height="26" fill="#4e2821"/><rect x="162" y="322" width="26" height="1" fill="#4e2821"/><rect x="163" y="323" width="1" height="25" fill="#46241e"/><rect x="163" y="323" width="25" height="1" fill="#46241e"/><rect x="164" y="324" width="24" height="24" fill="url(#t-brown)"/><rect x="188" y="324" width="2" height="24" fill="url(#r-brown)"/><rect x="224" y="320" width="32" height="32" fill="#2d1613"/><rect x="226" y="322" width="28" height="28" fill="#41211c"/><rect x="226" y="322" width="1" height="26" fill="#4e2821"/><rect x="226" y="322" width="26" height="1" fill="#4e2821"/><rect x="227" y="323" width="1" height="25" fill="#46241e"/><rect x="227" y="323" width="25" height="1" fill="#46241e"/><rect x="228" y="324" width="24" height="24" fill="url(#t-brown)"/><rect x="252" y="324" width="2" height="24" fill="url(#r-brown)"/><rect x="288" y="320" width="32" height="32" fill="#2d1613"/><rect x="290" y="322" width="28" height="28" fill="#41211c"/><rect x="290" y="322" width="1" height="26" fill="#4e2821"/><rect x="290" y="322" width="26" height="1" fill="#4e2821"/><rect x="291" y="323" width="1" height="25" fill="#46241e"/><rect x="291" y="323" width="25" height="1" fill="#46241e"/><rect x="292" y="324" width="24" height="24" fill="url(#t-brown)"/><rect x="316" y="324" width="2" height="24" fill="url(#r-brown)"/><rect x="352" y="320" width="32" height="32" fill="#2d1613"/><rect x="354" y="322" width="28" height="28" fill="#41211c"/><rect x="354" y="322" width="1" height="26" fill="#4e2821"/><rect x="354" y="322" width="26" height="1" fill="#4e2821"/><rect x="355" y="323" width="1" height="25" fill="#46241e"/><rect x="355" y="323" width="25" height="1" fill="#46241e"/><rect x="356" y="324" width="24" height="24" fill="url(#t-brown)"/><rect x="380" y="324" width="2" height="24" fill="url(#r-brown)"/><rect x="416" y="320" width="32" height="32" fill="#2d1613"/><rect x="418" y="322" width="28" height="28" fill="#41211c"/><rect x="418" y="322" width="1" height="26" fill="#4e2821"/><rect x="418" y="322" width="26" height="1" fill="#4e2821"/><rect x="419" y="323" width="1" height="25" fill="#46241e"/><rect x="419" y="323" width="25" height="1" fill="#46241e"/><rect x="420" y="324" width="24" height="24" fill="url(#t-brown)"/><rect x="444" y="324" width="2" height="24" fill="url(#r-brown)"/><rect x="480" y="320" width="32" height="32" fill="#2d1613"/><rect x="482" y="322" width="28" height="28" fill="#41211c"/><rect x="482" y="322" width="1" height="26" fill="#4e2821"/><rect x="482" y="322" width="26" height="1" fill="#4e2821"/><rect x="483" y="323" width="1" height="25" fill="#46241e"/><rect x="483" y="323" width="25" height="1" fill="#46241e"/><rect x="484" y="324" width="24" height="24" fill="url(#t-brown)"/><rect x="508" y="324" width="2" height="24" fill="url(#r-brown)"/><rect x="544" y="320" width="32" height="32" fill="#2d1613"/><rect x="546" y="322" width="28" height="28" fill="#41211c"/><rect x="546" y="322" width="1" height="26" fill="#4e2821"/><rect x="546" y="322" width="26" height="1" fill="#4e2821"/><rect x="547" y="323" width="1" height="25" fill="#46241e"/><rect x="547" y="323" width="25" height="1" fill="#46241e"/><rect x="548" y="324" width="24" height="24" fill="url(#t-brown)"/><rect x="572" y="324" width="2" height="24" fill="url(#r-brown)"/><rect x="608" y="320" width="32" height="32" fill="#2d1613"/><rect x="610" y="322" width="28" height="28" fill="#41211c"/><rect x="610" y="322" width="1" height="26" fill="#4e2821"/><rect x="610" y="322" width="26" height="1" fill="#4e2821"/><rect x="611" y="323" width="1" height="25" fill="#46241e"/><rect x="611" y="323" width="25" height="1" fill="#46241e"/><rect x="612" y="324" width="24" height="24" fill="url(#t-brown)"/><rect x="636" y="324" width="2" height="24" fill="url(#r-brown)"/><rect x="672" y="320" width="32" height="32" fill="#2d1613"/><rect x="674" y="322" width="28" height="28" fill="#41211c"/><rect x="674" y="322" width="1" height="26" fill="#4e2821"/><rect x="674" y="322" width="26" height="1" fill="#4e2821"/><rect x="675" y="323" width="1" height="25" fill="#46241e"/><rect x="675" y="323" width="25" height="1" fill="#46241e"/><rect x="676" y="324" width="24" height="24" fill="url(#t-brown)"/><rect x="700" y="324" width="2" height="24" fill="url(#r-brown)"/><rect x="736" y="320" width="32" height="32" fill="#2d1613"/><rect x="738" y="322" width="28" height="28" fill="#41211c"/><rect x="738" y="322" width="1" height="26" fill="#4e2821"/><rect x="738" y="322" width="26" height="1" fill="#4e2821"/><rect x="739" y="323" width="1" height="25" fill="#46241e"/><rect x="739" y="323" width="25" height="1" fill="#46241e"/><rect x="740" y="324" width="24" height="24" fill="url(#t-brown)"/><rect x="764" y="324" width="2" height="24" fill="url(#r-brown)"/><rect x="800" y="320" width="32" height="32" fill="#2d1613"/><rect x="802" y="322" width="28" height="28" fill="#41211c"/><rect x="802" y="322" width="1" height="26" fill="#4e2821"/><rect x="802" y="322" width="26" height="1" fill="#4e2821"/><rect x="803" y="323" width="1" height="25" fill="#46241e"/><rect x="803" y="323" width="25" height="1" fill="#46241e"/><rect x="804" y="324" width="24" height="24" fill="url(#t-brown)"/><rect x="828" y="324" width="2" height="24" fill="url(#r-brown)"/><rect x="864" y="320" width="32" height="32" fill="#2d1613"/><rect x="866" y="322" width="28" height="28" fill="#41211c"/><rect x="866" y="322" width="1" height="26" fill="#4e2821"/><rect x="866" y="322" width="26" height="1" fill="#4e2821"/><rect x="867" y="323" width="1" height="25" fill="#46241e"/><rect x="867" y="323" width="25" height="1" fill="#46241e"/><rect x="868" y="324" width="24" height="24" fill="url(#t-brown)"/><rect x="892" y="324" width="2" height="24" fill="url(#r-brown)"/><rect x="928" y="320" width="32" height="32" fill="#2d1613"/><rect x="930" y="322" width="28" height="28" fill="#41211c"/><rect x="930" y="322" width="1" height="26" fill="#4e2821"/><rect x="930" y="322" width="26" height="1" fill="#4e2821"/><rect x="931" y="323" width="1" height="25" fill="#46241e"/><rect x="931" y="323" width="25" height="1" fill="#46241e"/><rect x="932" y="324" width="24" height="24" fill="url(#t-brown)"/><rect x="956" y="324" width="2" height="24" fill="url(#r-brown)"/><rect x="992" y="320" width="32" height="32" fill="#2d1613"/><rect x="994" y="322" width="28" height="28" fill="#41211c"/><rect x="994" y="322" width="1" height="26" fill="#4e2821"/><rect x="994" y="322" width="26" height="1" fill="#4e2821"/><rect x="995" y="323" width="1" height="25" fill="#46241e"/><rect x="995" y="323" width="25" height="1" fill="#46241e"/><rect x="996" y="324" width="24" height="24" fill="url(#t-brown)"/><rect x="1020" y="324" width="2" height="24" fill="url(#r-brown)"/><rect x="1056" y="320" width="32" height="32" fill="#2d1613"/><rect x="1058" y="322" width="28" height="28" fill="#41211c"/><rect x="1058" y="322" width="1" height="26" fill="#4e2821"/><rect x="1058" y="322" width="26" height="1" fill="#4e2821"/><rect x="1059" y="323" width="1" height="25" fill="#46241e"/><rect x="1059" y="323" width="25" height="1" fill="#46241e"/><rect x="1060" y="324" width="24" height="24" fill="url(#t-brown)"/><rect x="1084" y="324" width="2" height="24" fill="url(#r-brown)"/><rect x="1120" y="320" width="32" height="32" fill="#2d1613"/><rect x="1122" y="322" width="28" height="28" fill="#41211c"/><rect x="1122" y="322" width="1" height="26" fill="#4e2821"/><rect x="1122" y="322" width="26" height="1" fill="#4e2821"/><rect x="1123" y="323" width="1" height="25" fill="#46241e"/><rect x="1123" y="323" width="25" height="1" fill="#46241e"/><rect x="1124" y="324" width="24" height="24" fill="url(#t-brown)"/><rect x="1148" y="324" width="2" height="24" fill="url(#r-brown)"/><rect x="1184" y="320" width="32" height="32" fill="#2d1613"/><rect x="1186" y="322" width="28" height="28" fill="#41211c"/><rect x="1186" y="322" width="1" height="26" fill="#4e2821"/><rect x="1186" y="322" width="26" height="1" fill="#4e2821"/><rect x="1187" y="323" width="1" height="25" fill="#46241e"/><rect x="1187" y="323" width="25" height="1" fill="#46241e"/><rect x="1188" y="324" width="24" height="24" fill="url(#t-brown)"/><rect x="1212" y="324" width="2" height="24" fill="url(#r-brown)"/><rect x="1248" y="320" width="32" height="32" fill="#2d1613"/><rect x="1250" y="322" width="28" height="28" fill="#41211c"/><rect x="1250" y="322" width="1" height="26" fill="#4e2821"/><rect x="1250" y="322" width="26" height="1" fill="#4e2821"/><rect x="1251" y="323" width="1" height="25" fill="#46241e"/><rect x="1251" y="323" width="25" height="1" fill="#46241e"/><rect x="1252" y="324" width="24" height="24" fill="url(#t-brown)"/><rect x="1276" y="324" width="2" height="24" fill="url(#r-brown)"/><rect x="32" y="384" width="32" height="32" fill="#224c29"/><rect x="34" y="386" width="28" height="28" fill="#2e6e39"/><rect x="34" y="386" width="1" height="26" fill="#388545"/><rect x="34" y="386" width="26" height="1" fill="#388545"/><rect x="35" y="387" width="1" height="25" fill="#32773e"/><rect x="35" y="387" width="25" height="1" fill="#32773e"/><rect x="36" y="388" width="24" height="24" fill="url(#t-dgreen)"/><rect x="60" y="388" width="2" height="24" fill="url(#r-dgreen)"/><rect x="96" y="384" width="32" height="32" fill="#224c29"/><rect x="98" y="386" width="28" height="28" fill="#2e6e39"/><rect x="98" y="386" width="1" height="26" fill="#388545"/><rect x="98" y="386" width="26" height="1" fill="#388545"/><rect x="99" y="387" width="1" height="25" fill="#32773e"/><rect x="99" y="387" width="25" height="1" fill="#32773e"/><rect x="100" y="388" width="24" height="24" fill="url(#t-dgreen)"/><rect x="124" y="388" width="2" height="24" fill="url(#r-dgreen)"/><rect x="160" y="384" width="32" height="32" fill="#224c29"/><rect x="162" y="386" width="28" height="28" fill="#2e6e39"/><rect x="162" y="386" width="1" height="26" fill="#388545"/><rect x="162" y="386" width="26" height="1" fill="#388545"/><rect x="163" y="387" width="1" height="25" fill="#32773e"/><rect x="163" y="387" width="25" height="1" fill="#32773e"/><rect x="164" y="388" width="24" height="24" fill="url(#t-dgreen)"/><rect x="188" y="388" width="2" height="24" fill="url(#r-dgreen)"/><rect x="224" y="384" width="32" height="32" fill="#224c29"/><rect x="226" y="386" width="28" height="28" fill="#2e6e39"/><rect x="226" y="386" width="1" height="26" fill="#388545"/><rect x="226" y="386" width="26" height="1" fill="#388545"/><rect x="227" y="387" width="1" height="25" fill="#32773e"/><rect x="227" y="387" width="25" height="1" fill="#32773e"/><rect x="228" y="388" width="24" height="24" fill="url(#t-dgreen)"/><rect x="252" y="388" width="2" height="24" fill="url(#r-dgreen)"/><rect x="288" y="384" width="32" height="32" fill="#224c29"/><rect x="290" y="386" width="28" height="28" fill="#2e6e39"/><rect x="290" y="386" width="1" height="26" fill="#388545"/><rect x="290" y="386" width="26" height="1" fill="#388545"/><rect x="291" y="387" width="1" height="25" fill="#32773e"/><rect x="291" y="387" width="25" height="1" fill="#32773e"/><rect x="292" y="388" width="24" height="24" fill="url(#t-dgreen)"/><rect x="316" y="388" width="2" height="24" fill="url(#r-dgreen)"/><rect x="352" y="384" width="32" height="32" fill="#224c29"/><rect x="354" y="386" width="28" height="28" fill="#2e6e39"/><rect x="354" y="386" width="1" height="26" fill="#388545"/><rect x="354" y="386" width="26" height="1" fill="#388545"/><rect x="355" y="387" width="1" height="25" fill="#32773e"/><rect x="355" y="387" width="25" height="1" fill="#32773e"/><rect x="356" y="388" width="24" height="24" fill="url(#t-dgreen)"/><rect x="380" y="388" width="2" height="24" fill="url(#r-dgreen)"/><rect x="416" y="384" width="32" height="32" fill="#224c29"/><rect x="418" y="386" width="28" height="28" fill="#2e6e39"/><rect x="418" y="386" width="1" height="26" fill="#388545"/><rect x="418" y="386" width="26" height="1" fill="#388545"/><rect x="419" y="387" width="1" height="25" fill="#32773e"/><rect x="419" y="387" width="25" height="1" fill="#32773e"/><rect x="420" y="388" width="24" height="24" fill="url(#t-dgreen)"/><rect x="444" y="388" width="2" height="24" fill="url(#r-dgreen)"/><rect x="480" y="384" width="32" height="32" fill="#224c29"/><rect x="482" y="386" width="28" height="28" fill="#2e6e39"/><rect x="482" y="386" width="1" height="26" fill="#388545"/><rect x="482" y="386" width="26" height="1" fill="#388545"/><rect x="483" y="387" width="1" height="25" fill="#32773e"/><rect x="483" y="387" width="25" height="1" fill="#32773e"/><rect x="484" y="388" width="24" height="24" fill="url(#t-dgreen)"/><rect x="508" y="388" width="2" height="24" fill="url(#r-dgreen)"/><rect x="544" y="384" width="32" height="32" fill="#224c29"/><rect x="546" y="386" width="28" height="28" fill="#2e6e39"/><rect x="546" y="386" width="1" height="26" fill="#388545"/><rect x="546" y="386" width="26" height="1" fill="#388545"/><rect x="547" y="387" width="1" height="25" fill="#32773e"/><rect x="547" y="387" width="25" height="1" fill="#32773e"/><rect x="548" y="388" width="24" height="24" fill="url(#t-dgreen)"/><rect x="572" y="388" width="2" height="24" fill="url(#r-dgreen)"/><rect x="608" y="384" width="32" height="32" fill="#224c29"/><rect x="610" y="386" width="28" height="28" fill="#2e6e39"/><rect x="610" y="386" width="1" height="26" fill="#388545"/><rect x="610" y="386" width="26" height="1" fill="#388545"/><rect x="611" y="387" width="1" height="25" fill="#32773e"/><rect x="611" y="387" width="25" height="1" fill="#32773e"/><rect x="612" y="388" width="24" height="24" fill="url(#t-dgreen)"/><rect x="636" y="388" width="2" height="24" fill="url(#r-dgreen)"/><rect x="672" y="384" width="32" height="32" fill="#224c29"/><rect x="674" y="386" width="28" height="28" fill="#2e6e39"/><rect x="674" y="386" width="1" height="26" fill="#388545"/><rect x="674" y="386" width="26" height="1" fill="#388545"/><rect x="675" y="387" width="1" height="25" fill="#32773e"/><rect x="675" y="387" width="25" height="1" fill="#32773e"/><rect x="676" y="388" width="24" height="24" fill="url(#t-dgreen)"/><rect x="700" y="388" width="2" height="24" fill="url(#r-dgreen)"/><rect x="736" y="384" width="32" height="32" fill="#224c29"/><rect x="738" y="386" width="28" height="28" fill="#2e6e39"/><rect x="738" y="386" width="1" height="26" fill="#388545"/><rect x="738" y="386" width="26" height="1" fill="#388545"/><rect x="739" y="387" width="1" height="25" fill="#32773e"/><rect x="739" y="387" width="25" height="1" fill="#32773e"/><rect x="740" y="388" width="24" height="24" fill="url(#t-dgreen)"/><rect x="764" y="388" width="2" height="24" fill="url(#r-dgreen)"/><rect x="800" y="384" width="32" height="32" fill="#224c29"/><rect x="802" y="386" width="28" height="28" fill="#2e6e39"/><rect x="802" y="386" width="1" height="26" fill="#388545"/><rect x="802" y="386" width="26" height="1" fill="#388545"/><rect x="803" y="387" width="1" height="25" fill="#32773e"/><rect x="803" y="387" width="25" height="1" fill="#32773e"/><rect x="804" y="388" width="24" height="24" fill="url(#t-dgreen)"/><rect x="828" y="388" width="2" height="24" fill="url(#r-dgreen)"/><rect x="864" y="384" width="32" height="32" fill="#224c29"/><rect x="866" y="386" width="28" height="28" fill="#2e6e39"/><rect x="866" y="386" width="1" height="26" fill="#388545"/><rect x="866" y="386" width="26" height="1" fill="#388545"/><rect x="867" y="387" width="1" height="25" fill="#32773e"/><rect x="867" y="387" width="25" height="1" fill="#32773e"/><rect x="868" y="388" width="24" height="24" fill="url(#t-dgreen)"/><rect x="892" y="388" width="2" height="24" fill="url(#r-dgreen)"/><rect x="928" y="384" width="32" height="32" fill="#224c29"/><rect x="930" y="386" width="28" height="28" fill="#2e6e39"/><rect x="930" y="386" width="1" height="26" fill="#388545"/><rect x="930" y="386" width="26" height="1" fill="#388545"/><rect x="931" y="387" width="1" height="25" fill="#32773e"/><rect x="931" y="387" width="25" height="1" fill="#32773e"/><rect x="932" y="388" width="24" height="24" fill="url(#t-dgreen)"/><rect x="956" y="388" width="2" height="24" fill="url(#r-dgreen)"/><rect x="992" y="384" width="32" height="32" fill="#224c29"/><rect x="994" y="386" width="28" height="28" fill="#2e6e39"/><rect x="994" y="386" width="1" height="26" fill="#388545"/><rect x="994" y="386" width="26" height="1" fill="#388545"/><rect x="995" y="387" width="1" height="25" fill="#32773e"/><rect x="995" y="387" width="25" height="1" fill="#32773e"/><rect x="996" y="388" width="24" height="24" fill="url(#t-dgreen)"/><rect x="1020" y="388" width="2" height="24" fill="url(#r-dgreen)"/><rect x="1056" y="384" width="32" height="32" fill="#224c29"/><rect x="1058" y="386" width="28" height="28" fill="#2e6e39"/><rect x="1058" y="386" width="1" height="26" fill="#388545"/><rect x="1058" y="386" width="26" height="1" fill="#388545"/><rect x="1059" y="387" width="1" height="25" fill="#32773e"/><rect x="1059" y="387" width="25" height="1" fill="#32773e"/><rect x="1060" y="388" width="24" height="24" fill="url(#t-dgreen)"/><rect x="1084" y="388" width="2" height="24" fill="url(#r-dgreen)"/><rect x="1120" y="384" width="32" height="32" fill="#224c29"/><rect x="1122" y="386" width="28" height="28" fill="#2e6e39"/><rect x="1122" y="386" width="1" height="26" fill="#388545"/><rect x="1122" y="386" width="26" height="1" fill="#388545"/><rect x="1123" y="387" width="1" height="25" fill="#32773e"/><rect x="1123" y="387" width="25" height="1" fill="#32773e"/><rect x="1124" y="388" width="24" height="24" fill="url(#t-dgreen)"/><rect x="1148" y="388" width="2" height="24" fill="url(#r-dgreen)"/><rect x="1184" y="384" width="32" height="32" fill="#224c29"/><rect x="1186" y="386" width="28" height="28" fill="#2e6e39"/><rect x="1186" y="386" width="1" height="26" fill="#388545"/><rect x="1186" y="386" width="26" height="1" fill="#388545"/><rect x="1187" y="387" width="1" height="25" fill="#32773e"/><rect x="1187" y="387" width="25" height="1" fill="#32773e"/><rect x="1188" y="388" width="24" height="24" fill="url(#t-dgreen)"/><rect x="1212" y="388" width="2" height="24" fill="url(#r-dgreen)"/><rect x="1248" y="384" width="32" height="32" fill="#224c29"/><rect x="1250" y="386" width="28" height="28" fill="#2e6e39"/><rect x="1250" y="386" width="1" height="26" fill="#388545"/><rect x="1250" y="386" width="26" height="1" fill="#388545"/><rect x="1251" y="387" width="1" height="25" fill="#32773e"/><rect x="1251" y="387" width="25" height="1" fill="#32773e"/><rect x="1252" y="388" width="24" height="24" fill="url(#t-dgreen)"/><rect x="1276" y="388" width="2" height="24" fill="url(#r-dgreen)"/><rect x="32" y="416" width="32" height="32" fill="#224c29"/><rect x="34" y="418" width="28" height="28" fill="#2e6e39"/><rect x="34" y="418" width="1" height="26" fill="#388545"/><rect x="34" y="418" width="26" height="1" fill="#388545"/><rect x="35" y="419" width="1" height="25" fill="#32773e"/><rect x="35" y="419" width="25" height="1" fill="#32773e"/><rect x="36" y="420" width="24" height="24" fill="url(#t-dgreen)"/><rect x="60" y="420" width="2" height="24" fill="url(#r-dgreen)"/><rect x="96" y="416" width="32" height="32" fill="#224c29"/><rect x="98" y="418" width="28" height="28" fill="#2e6e39"/><rect x="98" y="418" width="1" height="26" fill="#388545"/><rect x="98" y="418" width="26" height="1" fill="#388545"/><rect x="99" y="419" width="1" height="25" fill="#32773e"/><rect x="99" y="419" width="25" height="1" fill="#32773e"/><rect x="100" y="420" width="24" height="24" fill="url(#t-dgreen)"/><rect x="124" y="420" width="2" height="24" fill="url(#r-dgreen)"/><rect x="160" y="416" width="32" height="32" fill="#224c29"/><rect x="162" y="418" width="28" height="28" fill="#2e6e39"/><rect x="162" y="418" width="1" height="26" fill="#388545"/><rect x="162" y="418" width="26" height="1" fill="#388545"/><rect x="163" y="419" width="1" height="25" fill="#32773e"/><rect x="163" y="419" width="25" height="1" fill="#32773e"/><rect x="164" y="420" width="24" height="24" fill="url(#t-dgreen)"/><rect x="188" y="420" width="2" height="24" fill="url(#r-dgreen)"/><rect x="224" y="416" width="32" height="32" fill="#224c29"/><rect x="226" y="418" width="28" height="28" fill="#2e6e39"/><rect x="226" y="418" width="1" height="26" fill="#388545"/><rect x="226" y="418" width="26" height="1" fill="#388545"/><rect x="227" y="419" width="1" height="25" fill="#32773e"/><rect x="227" y="419" width="25" height="1" fill="#32773e"/><rect x="228" y="420" width="24" height="24" fill="url(#t-dgreen)"/><rect x="252" y="420" width="2" height="24" fill="url(#r-dgreen)"/><rect x="288" y="416" width="32" height="32" fill="#224c29"/><rect x="290" y="418" width="28" height="28" fill="#2e6e39"/><rect x="290" y="418" width="1" height="26" fill="#388545"/><rect x="290" y="418" width="26" height="1" fill="#388545"/><rect x="291" y="419" width="1" height="25" fill="#32773e"/><rect x="291" y="419" width="25" height="1" fill="#32773e"/><rect x="292" y="420" width="24" height="24" fill="url(#t-dgreen)"/><rect x="316" y="420" width="2" height="24" fill="url(#r-dgreen)"/><rect x="352" y="416" width="32" height="32" fill="#224c29"/><rect x="354" y="418" width="28" height="28" fill="#2e6e39"/><rect x="354" y="418" width="1" height="26" fill="#388545"/><rect x="354" y="418" width="26" height="1" fill="#388545"/><rect x="355" y="419" width="1" height="25" fill="#32773e"/><rect x="355" y="419" width="25" height="1" fill="#32773e"/><rect x="356" y="420" width="24" height="24" fill="url(#t-dgreen)"/><rect x="380" y="420" width="2" height="24" fill="url(#r-dgreen)"/><rect x="416" y="416" width="32" height="32" fill="#224c29"/><rect x="418" y="418" width="28" height="28" fill="#2e6e39"/><rect x="418" y="418" width="1" height="26" fill="#388545"/><rect x="418" y="418" width="26" height="1" fill="#388545"/><rect x="419" y="419" width="1" height="25" fill="#32773e"/><rect x="419" y="419" width="25" height="1" fill="#32773e"/><rect x="420" y="420" width="24" height="24" fill="url(#t-dgreen)"/><rect x="444" y="420" width="2" height="24" fill="url(#r-dgreen)"/><rect x="480" y="416" width="32" height="32" fill="#224c29"/><rect x="482" y="418" width="28" height="28" fill="#2e6e39"/><rect x="482" y="418" width="1" height="26" fill="#388545"/><rect x="482" y="418" width="26" height="1" fill="#388545"/><rect x="483" y="419" width="1" height="25" fill="#32773e"/><rect x="483" y="419" width="25" height="1" fill="#32773e"/><rect x="484" y="420" width="24" height="24" fill="url(#t-dgreen)"/><rect x="508" y="420" width="2" height="24" fill="url(#r-dgreen)"/><rect x="544" y="416" width="32" height="32" fill="#224c29"/><rect x="546" y="418" width="28" height="28" fill="#2e6e39"/><rect x="546" y="418" width="1" height="26" fill="#388545"/><rect x="546" y="418" width="26" height="1" fill="#388545"/><rect x="547" y="419" width="1" height="25" fill="#32773e"/><rect x="547" y="419" width="25" height="1" fill="#32773e"/><rect x="548" y="420" width="24" height="24" fill="url(#t-dgreen)"/><rect x="572" y="420" width="2" height="24" fill="url(#r-dgreen)"/><rect x="608" y="416" width="32" height="32" fill="#224c29"/><rect x="610" y="418" width="28" height="28" fill="#2e6e39"/><rect x="610" y="418" width="1" height="26" fill="#388545"/><rect x="610" y="418" width="26" height="1" fill="#388545"/><rect x="611" y="419" width="1" height="25" fill="#32773e"/><rect x="611" y="419" width="25" height="1" fill="#32773e"/><rect x="612" y="420" width="24" height="24" fill="url(#t-dgreen)"/><rect x="636" y="420" width="2" height="24" fill="url(#r-dgreen)"/><rect x="672" y="416" width="32" height="32" fill="#224c29"/><rect x="674" y="418" width="28" height="28" fill="#2e6e39"/><rect x="674" y="418" width="1" height="26" fill="#388545"/><rect x="674" y="418" width="26" height="1" fill="#388545"/><rect x="675" y="419" width="1" height="25" fill="#32773e"/><rect x="675" y="419" width="25" height="1" fill="#32773e"/><rect x="676" y="420" width="24" height="24" fill="url(#t-dgreen)"/><rect x="700" y="420" width="2" height="24" fill="url(#r-dgreen)"/><rect x="736" y="416" width="32" height="32" fill="#224c29"/><rect x="738" y="418" width="28" height="28" fill="#2e6e39"/><rect x="738" y="418" width="1" height="26" fill="#388545"/><rect x="738" y="418" width="26" height="1" fill="#388545"/><rect x="739" y="419" width="1" height="25" fill="#32773e"/><rect x="739" y="419" width="25" height="1" fill="#32773e"/><rect x="740" y="420" width="24" height="24" fill="url(#t-dgreen)"/><rect x="764" y="420" width="2" height="24" fill="url(#r-dgreen)"/><rect x="800" y="416" width="32" height="32" fill="#224c29"/><rect x="802" y="418" width="28" height="28" fill="#2e6e39"/><rect x="802" y="418" width="1" height="26" fill="#388545"/><rect x="802" y="418" width="26" height="1" fill="#388545"/><rect x="803" y="419" width="1" height="25" fill="#32773e"/><rect x="803" y="419" width="25" height="1" fill="#32773e"/><rect x="804" y="420" width="24" height="24" fill="url(#t-dgreen)"/><rect x="828" y="420" width="2" height="24" fill="url(#r-dgreen)"/><rect x="864" y="416" width="32" height="32" fill="#224c29"/><rect x="866" y="418" width="28" height="28" fill="#2e6e39"/><rect x="866" y="418" width="1" height="26" fill="#388545"/><rect x="866" y="418" width="26" height="1" fill="#388545"/><rect x="867" y="419" width="1" height="25" fill="#32773e"/><rect x="867" y="419" width="25" height="1" fill="#32773e"/><rect x="868" y="420" width="24" height="24" fill="url(#t-dgreen)"/><rect x="892" y="420" width="2" height="24" fill="url(#r-dgreen)"/><rect x="928" y="416" width="32" height="32" fill="#224c29"/><rect x="930" y="418" width="28" height="28" fill="#2e6e39"/><rect x="930" y="418" width="1" height="26" fill="#388545"/><rect x="930" y="418" width="26" height="1" fill="#388545"/><rect x="931" y="419" width="1" height="25" fill="#32773e"/><rect x="931" y="419" width="25" height="1" fill="#32773e"/><rect x="932" y="420" width="24" height="24" fill="url(#t-dgreen)"/><rect x="956" y="420" width="2" height="24" fill="url(#r-dgreen)"/><rect x="992" y="416" width="32" height="32" fill="#224c29"/><rect x="994" y="418" width="28" height="28" fill="#2e6e39"/><rect x="994" y="418" width="1" height="26" fill="#388545"/><rect x="994" y="418" width="26" height="1" fill="#388545"/><rect x="995" y="419" width="1" height="25" fill="#32773e"/><rect x="995" y="419" width="25" height="1" fill="#32773e"/><rect x="996" y="420" width="24" height="24" fill="url(#t-dgreen)"/><rect x="1020" y="420" width="2" height="24" fill="url(#r-dgreen)"/><rect x="1056" y="416" width="32" height="32" fill="#224c29"/><rect x="1058" y="418" width="28" height="28" fill="#2e6e39"/><rect x="1058" y="418" width="1" height="26" fill="#388545"/><rect x="1058" y="418" width="26" height="1" fill="#388545"/><rect x="1059" y="419" width="1" height="25" fill="#32773e"/><rect x="1059" y="419" width="25" height="1" fill="#32773e"/><rect x="1060" y="420" width="24" height="24" fill="url(#t-dgreen)"/><rect x="1084" y="420" width="2" height="24" fill="url(#r-dgreen)"/><rect x="1120" y="416" width="32" height="32" fill="#224c29"/><rect x="1122" y="418" width="28" height="28" fill="#2e6e39"/><rect x="1122" y="418" width="1" height="26" fill="#388545"/><rect x="1122" y="418" width="26" height="1" fill="#388545"/><rect x="1123" y="419" width="1" height="25" fill="#32773e"/><rect x="1123" y="419" width="25" height="1" fill="#32773e"/><rect x="1124" y="420" width="24" height="24" fill="url(#t-dgreen)"/><rect x="1148" y="420" width="2" height="24" fill="url(#r-dgreen)"/><rect x="1184" y="416" width="32" height="32" fill="#224c29"/><rect x="1186" y="418" width="28" height="28" fill="#2e6e39"/><rect x="1186" y="418" width="1" height="26" fill="#388545"/><rect x="1186" y="418" width="26" height="1" fill="#388545"/><rect x="1187" y="419" width="1" height="25" fill="#32773e"/><rect x="1187" y="419" width="25" height="1" fill="#32773e"/><rect x="1188" y="420" width="24" height="24" fill="url(#t-dgreen)"/><rect x="1212" y="420" width="2" height="24" fill="url(#r-dgreen)"/><rect x="1248" y="416" width="32" height="32" fill="#224c29"/><rect x="1250" y="418" width="28" height="28" fill="#2e6e39"/><rect x="1250" y="418" width="1" height="26" fill="#388545"/><rect x="1250" y="418" width="26" height="1" fill="#388545"/><rect x="1251" y="419" width="1" height="25" fill="#32773e"/><rect x="1251" y="419" width="25" height="1" fill="#32773e"/><rect x="1252" y="420" width="24" height="24" fill="url(#t-dgreen)"/><rect x="1276" y="420" width="2" height="24" fill="url(#r-dgreen)"/><rect x="96" y="480" width="32" height="32" fill="#6a3a3c"/><rect x="98" y="482" width="28" height="28" fill="#945151"/><rect x="98" y="482" width="1" height="26" fill="#b05f5f"/><rect x="98" y="482" width="26" height="1" fill="#b05f5f"/><rect x="99" y="483" width="1" height="25" fill="#9f5757"/><rect x="99" y="483" width="25" height="1" fill="#9f5757"/><rect x="100" y="484" width="24" height="24" fill="url(#t-pink)"/><rect x="124" y="484" width="2" height="24" fill="url(#r-pink)"/><rect x="160" y="480" width="32" height="32" fill="#6a3a3c"/><rect x="162" y="482" width="28" height="28" fill="#945151"/><rect x="162" y="482" width="1" height="26" fill="#b05f5f"/><rect x="162" y="482" width="26" height="1" fill="#b05f5f"/><rect x="163" y="483" width="1" height="25" fill="#9f5757"/><rect x="163" y="483" width="25" height="1" fill="#9f5757"/><rect x="164" y="484" width="24" height="24" fill="url(#t-pink)"/><rect x="188" y="484" width="2" height="24" fill="url(#r-pink)"/><rect x="352" y="480" width="32" height="32" fill="#6a3a3c"/><rect x="354" y="482" width="28" height="28" fill="#945151"/><rect x="354" y="482" width="1" height="26" fill="#b05f5f"/><rect x="354" y="482" width="26" height="1" fill="#b05f5f"/><rect x="355" y="483" width="1" height="25" fill="#9f5757"/><rect x="355" y="483" width="25" height="1" fill="#9f5757"/><rect x="356" y="484" width="24" height="24" fill="url(#t-pink)"/><rect x="380" y="484" width="2" height="24" fill="url(#r-pink)"/><rect x="416" y="480" width="32" height="32" fill="#6a3a3c"/><rect x="418" y="482" width="28" height="28" fill="#945151"/><rect x="418" y="482" width="1" height="26" fill="#b05f5f"/><rect x="418" y="482" width="26" height="1" fill="#b05f5f"/><rect x="419" y="483" width="1" height="25" fill="#9f5757"/><rect x="419" y="483" width="25" height="1" fill="#9f5757"/><rect x="420" y="484" width="24" height="24" fill="url(#t-pink)"/><rect x="444" y="484" width="2" height="24" fill="url(#r-pink)"/><rect x="608" y="480" width="32" height="32" fill="#6a3a3c"/><rect x="610" y="482" width="28" height="28" fill="#945151"/><rect x="610" y="482" width="1" height="26" fill="#b05f5f"/><rect x="610" y="482" width="26" height="1" fill="#b05f5f"/><rect x="611" y="483" width="1" height="25" fill="#9f5757"/><rect x="611" y="483" width="25" height="1" fill="#9f5757"/><rect x="612" y="484" width="24" height="24" fill="url(#t-pink)"/><rect x="636" y="484" width="2" height="24" fill="url(#r-pink)"/><rect x="672" y="480" width="32" height="32" fill="#6a3a3c"/><rect x="674" y="482" width="28" height="28" fill="#945151"/><rect x="674" y="482" width="1" height="26" fill="#b05f5f"/><rect x="674" y="482" width="26" height="1" fill="#b05f5f"/><rect x="675" y="483" width="1" height="25" fill="#9f5757"/><rect x="675" y="483" width="25" height="1" fill="#9f5757"/><rect x="676" y="484" width="24" height="24" fill="url(#t-pink)"/><rect x="700" y="484" width="2" height="24" fill="url(#r-pink)"/><rect x="864" y="480" width="32" height="32" fill="#6a3a3c"/><rect x="866" y="482" width="28" height="28" fill="#945151"/><rect x="866" y="482" width="1" height="26" fill="#b05f5f"/><rect x="866" y="482" width="26" height="1" fill="#b05f5f"/><rect x="867" y="483" width="1" height="25" fill="#9f5757"/><rect x="867" y="483" width="25" height="1" fill="#9f5757"/><rect x="868" y="484" width="24" height="24" fill="url(#t-pink)"/><rect x="892" y="484" width="2" height="24" fill="url(#r-pink)"/><rect x="928" y="480" width="32" height="32" fill="#6a3a3c"/><rect x="930" y="482" width="28" height="28" fill="#945151"/><rect x="930" y="482" width="1" height="26" fill="#b05f5f"/><rect x="930" y="482" width="26" height="1" fill="#b05f5f"/><rect x="931" y="483" width="1" height="25" fill="#9f5757"/><rect x="931" y="483" width="25" height="1" fill="#9f5757"/><rect x="932" y="484" width="24" height="24" fill="url(#t-pink)"/><rect x="956" y="484" width="2" height="24" fill="url(#r-pink)"/><rect x="1120" y="480" width="32" height="32" fill="#6a3a3c"/><rect x="1122" y="482" width="28" height="28" fill="#945151"/><rect x="1122" y="482" width="1" height="26" fill="#b05f5f"/><rect x="1122" y="482" width="26" height="1" fill="#b05f5f"/><rect x="1123" y="483" width="1" height="25" fill="#9f5757"/><rect x="1123" y="483" width="25" height="1" fill="#9f5757"/><rect x="1124" y="484" width="24" height="24" fill="url(#t-pink)"/><rect x="1148" y="484" width="2" height="24" fill="url(#r-pink)"/><rect x="1248" y="480" width="32" height="32" fill="#6a3a3c"/><rect x="1250" y="482" width="28" height="28" fill="#945151"/><rect x="1250" y="482" width="1" height="26" fill="#b05f5f"/><rect x="1250" y="482" width="26" height="1" fill="#b05f5f"/><rect x="1251" y="483" width="1" height="25" fill="#9f5757"/><rect x="1251" y="483" width="25" height="1" fill="#9f5757"/><rect x="1252" y="484" width="24" height="24" fill="url(#t-pink)"/><rect x="1276" y="484" width="2" height="24" fill="url(#r-pink)"/><rect x="224" y="512" width="32" height="32" fill="#6c6c12"/><rect x="226" y="514" width="28" height="28" fill="#919118"/><rect x="226" y="514" width="1" height="26" fill="#adad1c"/><rect x="226" y="514" width="26" height="1" fill="#adad1c"/><rect x="227" y="515" width="1" height="25" fill="#9c9c1a"/><rect x="227" y="515" width="25" height="1" fill="#9c9c1a"/><rect x="228" y="516" width="24" height="24" fill="url(#t-yellow)"/><rect x="252" y="516" width="2" height="24" fill="url(#r-yellow)"/><rect x="320" y="512" width="32" height="32" fill="#6c6c12"/><rect x="322" y="514" width="28" height="28" fill="#919118"/><rect x="322" y="514" width="1" height="26" fill="#adad1c"/><rect x="322" y="514" width="26" height="1" fill="#adad1c"/><rect x="323" y="515" width="1" height="25" fill="#9c9c1a"/><rect x="323" y="515" width="25" height="1" fill="#9c9c1a"/><rect x="324" y="516" width="24" height="24" fill="url(#t-yellow)"/><rect x="348" y="516" width="2" height="24" fill="url(#r-yellow)"/><rect x="384" y="512" width="32" height="32" fill="#6c6c12"/><rect x="386" y="514" width="28" height="28" fill="#919118"/><rect x="386" y="514" width="1" height="26" fill="#adad1c"/><rect x="386" y="514" width="26" height="1" fill="#adad1c"/><rect x="387" y="515" width="1" height="25" fill="#9c9c1a"/><rect x="387" y="515" width="25" height="1" fill="#9c9c1a"/><rect x="388" y="516" width="24" height="24" fill="url(#t-yellow)"/><rect x="412" y="516" width="2" height="24" fill="url(#r-yellow)"/><rect x="480" y="512" width="32" height="32" fill="#6c6c12"/><rect x="482" y="514" width="28" height="28" fill="#919118"/><rect x="482" y="514" width="1" height="26" fill="#adad1c"/><rect x="482" y="514" width="26" height="1" fill="#adad1c"/><rect x="483" y="515" width="1" height="25" fill="#9c9c1a"/><rect x="483" y="515" width="25" height="1" fill="#9c9c1a"/><rect x="484" y="516" width="24" height="24" fill="url(#t-yellow)"/><rect x="508" y="516" width="2" height="24" fill="url(#r-yellow)"/><rect x="736" y="512" width="32" height="32" fill="#6c6c12"/><rect x="738" y="514" width="28" height="28" fill="#919118"/><rect x="738" y="514" width="1" height="26" fill="#adad1c"/><rect x="738" y="514" width="26" height="1" fill="#adad1c"/><rect x="739" y="515" width="1" height="25" fill="#9c9c1a"/><rect x="739" y="515" width="25" height="1" fill="#9c9c1a"/><rect x="740" y="516" width="24" height="24" fill="url(#t-yellow)"/><rect x="764" y="516" width="2" height="24" fill="url(#r-yellow)"/><rect x="832" y="512" width="32" height="32" fill="#6c6c12"/><rect x="834" y="514" width="28" height="28" fill="#919118"/><rect x="834" y="514" width="1" height="26" fill="#adad1c"/><rect x="834" y="514" width="26" height="1" fill="#adad1c"/><rect x="835" y="515" width="1" height="25" fill="#9c9c1a"/><rect x="835" y="515" width="25" height="1" fill="#9c9c1a"/><rect x="836" y="516" width="24" height="24" fill="url(#t-yellow)"/><rect x="860" y="516" width="2" height="24" fill="url(#r-yellow)"/><rect x="896" y="512" width="32" height="32" fill="#6c6c12"/><rect x="898" y="514" width="28" height="28" fill="#919118"/><rect x="898" y="514" width="1" height="26" fill="#adad1c"/><rect x="898" y="514" width="26" height="1" fill="#adad1c"/><rect x="899" y="515" width="1" height="25" fill="#9c9c1a"/><rect x="899" y="515" width="25" height="1" fill="#9c9c1a"/><rect x="900" y="516" width="24" height="24" fill="url(#t-yellow)"/><rect x="924" y="516" width="2" height="24" fill="url(#r-yellow)"/><rect x="992" y="512" width="32" height="32" fill="#6c6c12"/><rect x="994" y="514" width="28" height="28" fill="#919118"/><rect x="994" y="514" width="1" height="26" fill="#adad1c"/><rect x="994" y="514" width="26" height="1" fill="#adad1c"/><rect x="995" y="515" width="1" height="25" fill="#9c9c1a"/><rect x="995" y="515" width="25" height="1" fill="#9c9c1a"/><rect x="996" y="516" width="24" height="24" fill="url(#t-yellow)"/><rect x="1020" y="516" width="2" height="24" fill="url(#r-yellow)"/><rect x="1120" y="512" width="32" height="32" fill="#6c6c12"/><rect x="1122" y="514" width="28" height="28" fill="#919118"/><rect x="1122" y="514" width="1" height="26" fill="#adad1c"/><rect x="1122" y="514" width="26" height="1" fill="#adad1c"/><rect x="1123" y="515" width="1" height="25" fill="#9c9c1a"/><rect x="1123" y="515" width="25" height="1" fill="#9c9c1a"/><rect x="1124" y="516" width="24" height="24" fill="url(#t-yellow)"/><rect x="1148" y="516" width="2" height="24" fill="url(#r-yellow)"/><rect x="1152" y="512" width="32" height="32" fill="#6c6c12"/><rect x="1154" y="514" width="28" height="28" fill="#919118"/><rect x="1154" y="514" width="1" height="26" fill="#adad1c"/><rect x="1154" y="514" width="26" height="1" fill="#adad1c"/><rect x="1155" y="515" width="1" height="25" fill="#9c9c1a"/><rect x="1155" y="515" width="25" height="1" fill="#9c9c1a"/><rect x="1156" y="516" width="24" height="24" fill="url(#t-yellow)"/><rect x="1180" y="516" width="2" height="24" fill="url(#r-yellow)"/><rect x="1216" y="512" width="32" height="32" fill="#6c6c12"/><rect x="1218" y="514" width="28" height="28" fill="#919118"/><rect x="1218" y="514" width="1" height="26" fill="#adad1c"/><rect x="1218" y="514" width="26" height="1" fill="#adad1c"/><rect x="1219" y="515" width="1" height="25" fill="#9c9c1a"/><rect x="1219" y="515" width="25" height="1" fill="#9c9c1a"/><rect x="1220" y="516" width="24" height="24" fill="url(#t-yellow)"/><rect x="1244" y="516" width="2" height="24" fill="url(#r-yellow)"/><rect x="1248" y="512" width="32" height="32" fill="#6c6c12"/><rect x="1250" y="514" width="28" height="28" fill="#919118"/><rect x="1250" y="514" width="1" height="26" fill="#adad1c"/><rect x="1250" y="514" width="26" height="1" fill="#adad1c"/><rect x="1251" y="515" width="1" height="25" fill="#9c9c1a"/><rect x="1251" y="515" width="25" height="1" fill="#9c9c1a"/><rect x="1252" y="516" width="24" height="24" fill="url(#t-yellow)"/><rect x="1276" y="516" width="2" height="24" fill="url(#r-yellow)"/><rect x="96" y="544" width="32" height="32" fill="#54305d"/><rect x="98" y="546" width="28" height="28" fill="#78437e"/><rect x="98" y="546" width="1" height="26" fill="#8f4f95"/><rect x="98" y="546" width="26" height="1" fill="#8f4f95"/><rect x="99" y="547" width="1" height="25" fill="#814887"/><rect x="99" y="547" width="25" height="1" fill="#814887"/><rect x="100" y="548" width="24" height="24" fill="url(#t-purple)"/><rect x="124" y="548" width="2" height="24" fill="url(#r-purple)"/><rect x="224" y="544" width="32" height="32" fill="#54305d"/><rect x="226" y="546" width="28" height="28" fill="#78437e"/><rect x="226" y="546" width="1" height="26" fill="#8f4f95"/><rect x="226" y="546" width="26" height="1" fill="#8f4f95"/><rect x="227" y="547" width="1" height="25" fill="#814887"/><rect x="227" y="547" width="25" height="1" fill="#814887"/><rect x="228" y="548" width="24" height="24" fill="url(#t-purple)"/><rect x="252" y="548" width="2" height="24" fill="url(#r-purple)"/><rect x="352" y="544" width="32" height="32" fill="#54305d"/><rect x="354" y="546" width="28" height="28" fill="#78437e"/><rect x="354" y="546" width="1" height="26" fill="#8f4f95"/><rect x="354" y="546" width="26" height="1" fill="#8f4f95"/><rect x="355" y="547" width="1" height="25" fill="#814887"/><rect x="355" y="547" width="25" height="1" fill="#814887"/><rect x="356" y="548" width="24" height="24" fill="url(#t-purple)"/><rect x="380" y="548" width="2" height="24" fill="url(#r-purple)"/><rect x="480" y="544" width="32" height="32" fill="#54305d"/><rect x="482" y="546" width="28" height="28" fill="#78437e"/><rect x="482" y="546" width="1" height="26" fill="#8f4f95"/><rect x="482" y="546" width="26" height="1" fill="#8f4f95"/><rect x="483" y="547" width="1" height="25" fill="#814887"/><rect x="483" y="547" width="25" height="1" fill="#814887"/><rect x="484" y="548" width="24" height="24" fill="url(#t-purple)"/><rect x="508" y="548" width="2" height="24" fill="url(#r-purple)"/><rect x="608" y="544" width="32" height="32" fill="#54305d"/><rect x="610" y="546" width="28" height="28" fill="#78437e"/><rect x="610" y="546" width="1" height="26" fill="#8f4f95"/><rect x="610" y="546" width="26" height="1" fill="#8f4f95"/><rect x="611" y="547" width="1" height="25" fill="#814887"/><rect x="611" y="547" width="25" height="1" fill="#814887"/><rect x="612" y="548" width="24" height="24" fill="url(#t-purple)"/><rect x="636" y="548" width="2" height="24" fill="url(#r-purple)"/><rect x="736" y="544" width="32" height="32" fill="#54305d"/><rect x="738" y="546" width="28" height="28" fill="#78437e"/><rect x="738" y="546" width="1" height="26" fill="#8f4f95"/><rect x="738" y="546" width="26" height="1" fill="#8f4f95"/><rect x="739" y="547" width="1" height="25" fill="#814887"/><rect x="739" y="547" width="25" height="1" fill="#814887"/><rect x="740" y="548" width="24" height="24" fill="url(#t-purple)"/><rect x="764" y="548" width="2" height="24" fill="url(#r-purple)"/><rect x="864" y="544" width="32" height="32" fill="#54305d"/><rect x="866" y="546" width="28" height="28" fill="#78437e"/><rect x="866" y="546" width="1" height="26" fill="#8f4f95"/><rect x="866" y="546" width="26" height="1" fill="#8f4f95"/><rect x="867" y="547" width="1" height="25" fill="#814887"/><rect x="867" y="547" width="25" height="1" fill="#814887"/><rect x="868" y="548" width="24" height="24" fill="url(#t-purple)"/><rect x="892" y="548" width="2" height="24" fill="url(#r-purple)"/><rect x="992" y="544" width="32" height="32" fill="#54305d"/><rect x="994" y="546" width="28" height="28" fill="#78437e"/><rect x="994" y="546" width="1" height="26" fill="#8f4f95"/><rect x="994" y="546" width="26" height="1" fill="#8f4f95"/><rect x="995" y="547" width="1" height="25" fill="#814887"/><rect x="995" y="547" width="25" height="1" fill="#814887"/><rect x="996" y="548" width="24" height="24" fill="url(#t-purple)"/><rect x="1020" y="548" width="2" height="24" fill="url(#r-purple)"/><rect x="96" y="608" width="32" height="32" fill="#2c4f4f"/><rect x="98" y="610" width="28" height="28" fill="#3a6c6c"/><rect x="98" y="610" width="1" height="26" fill="#468282"/><rect x="98" y="610" width="26" height="1" fill="#468282"/><rect x="99" y="611" width="1" height="25" fill="#3f7575"/><rect x="99" y="611" width="25" height="1" fill="#3f7575"/><rect x="100" y="612" width="24" height="24" fill="url(#t-teal)"/><rect x="124" y="612" width="2" height="24" fill="url(#r-teal)"/><rect x="288" y="608" width="32" height="32" fill="#2c4f4f"/><rect x="290" y="610" width="28" height="28" fill="#3a6c6c"/><rect x="290" y="610" width="1" height="26" fill="#468282"/><rect x="290" y="610" width="26" height="1" fill="#468282"/><rect x="291" y="611" width="1" height="25" fill="#3f7575"/><rect x="291" y="611" width="25" height="1" fill="#3f7575"/><rect x="292" y="612" width="24" height="24" fill="url(#t-teal)"/><rect x="316" y="612" width="2" height="24" fill="url(#r-teal)"/><rect x="416" y="608" width="32" height="32" fill="#2c4f4f"/><rect x="418" y="610" width="28" height="28" fill="#3a6c6c"/><rect x="418" y="610" width="1" height="26" fill="#468282"/><rect x="418" y="610" width="26" height="1" fill="#468282"/><rect x="419" y="611" width="1" height="25" fill="#3f7575"/><rect x="419" y="611" width="25" height="1" fill="#3f7575"/><rect x="420" y="612" width="24" height="24" fill="url(#t-teal)"/><rect x="444" y="612" width="2" height="24" fill="url(#r-teal)"/><rect x="480" y="608" width="32" height="32" fill="#2c4f4f"/><rect x="482" y="610" width="28" height="28" fill="#3a6c6c"/><rect x="482" y="610" width="1" height="26" fill="#468282"/><rect x="482" y="610" width="26" height="1" fill="#468282"/><rect x="483" y="611" width="1" height="25" fill="#3f7575"/><rect x="483" y="611" width="25" height="1" fill="#3f7575"/><rect x="484" y="612" width="24" height="24" fill="url(#t-teal)"/><rect x="508" y="612" width="2" height="24" fill="url(#r-teal)"/><rect x="608" y="608" width="32" height="32" fill="#2c4f4f"/><rect x="610" y="610" width="28" height="28" fill="#3a6c6c"/><rect x="610" y="610" width="1" height="26" fill="#468282"/><rect x="610" y="610" width="26" height="1" fill="#468282"/><rect x="611" y="611" width="1" height="25" fill="#3f7575"/><rect x="611" y="611" width="25" height="1" fill="#3f7575"/><rect x="612" y="612" width="24" height="24" fill="url(#t-teal)"/><rect x="636" y="612" width="2" height="24" fill="url(#r-teal)"/><rect x="672" y="608" width="32" height="32" fill="#2c4f4f"/><rect x="674" y="610" width="28" height="28" fill="#3a6c6c"/><rect x="674" y="610" width="1" height="26" fill="#468282"/><rect x="674" y="610" width="26" height="1" fill="#468282"/><rect x="675" y="611" width="1" height="25" fill="#3f7575"/><rect x="675" y="611" width="25" height="1" fill="#3f7575"/><rect x="676" y="612" width="24" height="24" fill="url(#t-teal)"/><rect x="700" y="612" width="2" height="24" fill="url(#r-teal)"/><rect x="736" y="608" width="32" height="32" fill="#2c4f4f"/><rect x="738" y="610" width="28" height="28" fill="#3a6c6c"/><rect x="738" y="610" width="1" height="26" fill="#468282"/><rect x="738" y="610" width="26" height="1" fill="#468282"/><rect x="739" y="611" width="1" height="25" fill="#3f7575"/><rect x="739" y="611" width="25" height="1" fill="#3f7575"/><rect x="740" y="612" width="24" height="24" fill="url(#t-teal)"/><rect x="764" y="612" width="2" height="24" fill="url(#r-teal)"/><rect x="800" y="608" width="32" height="32" fill="#2c4f4f"/><rect x="802" y="610" width="28" height="28" fill="#3a6c6c"/><rect x="802" y="610" width="1" height="26" fill="#468282"/><rect x="802" y="610" width="26" height="1" fill="#468282"/><rect x="803" y="611" width="1" height="25" fill="#3f7575"/><rect x="803" y="611" width="25" height="1" fill="#3f7575"/><rect x="804" y="612" width="24" height="24" fill="url(#t-teal)"/><rect x="828" y="612" width="2" height="24" fill="url(#r-teal)"/><rect x="864" y="608" width="32" height="32" fill="#2c4f4f"/><rect x="866" y="610" width="28" height="28" fill="#3a6c6c"/><rect x="866" y="610" width="1" height="26" fill="#468282"/><rect x="866" y="610" width="26" height="1" fill="#468282"/><rect x="867" y="611" width="1" height="25" fill="#3f7575"/><rect x="867" y="611" width="25" height="1" fill="#3f7575"/><rect x="868" y="612" width="24" height="24" fill="url(#t-teal)"/><rect x="892" y="612" width="2" height="24" fill="url(#r-teal)"/><rect x="928" y="608" width="32" height="32" fill="#2c4f4f"/><rect x="930" y="610" width="28" height="28" fill="#3a6c6c"/><rect x="930" y="610" width="1" height="26" fill="#468282"/><rect x="930" y="610" width="26" height="1" fill="#468282"/><rect x="931" y="611" width="1" height="25" fill="#3f7575"/><rect x="931" y="611" width="25" height="1" fill="#3f7575"/><rect x="932" y="612" width="24" height="24" fill="url(#t-teal)"/><rect x="956" y="612" width="2" height="24" fill="url(#r-teal)"/><rect x="992" y="608" width="32" height="32" fill="#2c4f4f"/><rect x="994" y="610" width="28" height="28" fill="#3a6c6c"/><rect x="994" y="610" width="1" height="26" fill="#468282"/><rect x="994" y="610" width="26" height="1" fill="#468282"/><rect x="995" y="611" width="1" height="25" fill="#3f7575"/><rect x="995" y="611" width="25" height="1" fill="#3f7575"/><rect x="996" y="612" width="24" height="24" fill="url(#t-teal)"/><rect x="1020" y="612" width="2" height="24" fill="url(#r-teal)"/><rect x="1056" y="608" width="32" height="32" fill="#2c4f4f"/><rect x="1058" y="610" width="28" height="28" fill="#3a6c6c"/><rect x="1058" y="610" width="1" height="26" fill="#468282"/><rect x="1058" y="610" width="26" height="1" fill="#468282"/><rect x="1059" y="611" width="1" height="25" fill="#3f7575"/><rect x="1059" y="611" width="25" height="1" fill="#3f7575"/><rect x="1060" y="612" width="24" height="24" fill="url(#t-teal)"/><rect x="1084" y="612" width="2" height="24" fill="url(#r-teal)"/><rect x="1120" y="608" width="32" height="32" fill="#2c4f4f"/><rect x="1122" y="610" width="28" height="28" fill="#3a6c6c"/><rect x="1122" y="610" width="1" height="26" fill="#468282"/><rect x="1122" y="610" width="26" height="1" fill="#468282"/><rect x="1123" y="611" width="1" height="25" fill="#3f7575"/><rect x="1123" y="611" width="25" height="1" fill="#3f7575"/><rect x="1124" y="612" width="24" height="24" fill="url(#t-teal)"/><rect x="1148" y="612" width="2" height="24" fill="url(#r-teal)"/><rect x="1184" y="608" width="32" height="32" fill="#2c4f4f"/><rect x="1186" y="610" width="28" height="28" fill="#3a6c6c"/><rect x="1186" y="610" width="1" height="26" fill="#468282"/><rect x="1186" y="610" width="26" height="1" fill="#468282"/><rect x="1187" y="611" width="1" height="25" fill="#3f7575"/><rect x="1187" y="611" width="25" height="1" fill="#3f7575"/><rect x="1188" y="612" width="24" height="24" fill="url(#t-teal)"/><rect x="1212" y="612" width="2" height="24" fill="url(#r-teal)"/><rect x="1248" y="608" width="32" height="32" fill="#2c4f4f"/><rect x="1250" y="610" width="28" height="28" fill="#3a6c6c"/><rect x="1250" y="610" width="1" height="26" fill="#468282"/><rect x="1250" y="610" width="26" height="1" fill="#468282"/><rect x="1251" y="611" width="1" height="25" fill="#3f7575"/><rect x="1251" y="611" width="25" height="1" fill="#3f7575"/><rect x="1252" y="612" width="24" height="24" fill="url(#t-teal)"/><rect x="1276" y="612" width="2" height="24" fill="url(#r-teal)"/></svg>
<div class="t" style="left:96px;top:0px">G4</div><div class="t" style="left:128px;top:0px">G4</div><div class="t" style="left:160px;top:0px">G4</div><div class="t" style="left:192px;top:0px">G4</div><div class="t" style="left:224px;top:0px">G4</div><div class="t" style="left:288px;top:0px">G4</div><div class="t" style="left:320px;top:0px">G4</div><div class="t" style="left:352px;top:0px">G4</div><div class="t" style="left:416px;top:0px">D5</div><div class="t" style="left:480px;top:0px">G4</div><div class="t" style="left:608px;top:0px">B4</div><div class="t" style="left:736px;top:0px">A4</div><div class="t" style="left:800px;top:0px">B4</div><div class="t" style="left:992px;top:0px">A4</div><div class="t" style="left:1056px;top:0px">B4</div><div class="t" style="left:1248px;top:0px">D&#35;5</div><div class="t" style="left:96px;top:32px">G4</div><div class="t" style="left:128px;top:32px">G4</div><div class="t" style="left:160px;top:32px">G4</div><div class="t" style="left:192px;top:32px">G4</div><div class="t" style="left:224px;top:32px">G4</div><div class="t" style="left:288px;top:32px">G4</div><div class="t" style="left:320px;top:32px">G4</div><div class="t" style="left:352px;top:32px">G4</div><div class="t" style="left:416px;top:32px">D5</div><div class="t" style="left:480px;top:32px">G4</div><div class="t" style="left:608px;top:32px">B4</div><div class="t" style="left:736px;top:32px">A4</div><div class="t" style="left:800px;top:32px">B4</div><div class="t" style="left:992px;top:32px">A4</div><div class="t" style="left:1056px;top:32px">B4</div><div class="t" style="left:1248px;top:32px">D&#35;5</div><div class="t" style="left:96px;top:64px">G3</div><div class="t" style="left:160px;top:64px">G3</div><div class="t" style="left:224px;top:64px">G3</div><div class="t" style="left:288px;top:64px">G3</div><div class="t" style="left:352px;top:64px">G3</div><div class="t" style="left:416px;top:64px">D4</div><div class="t" style="left:480px;top:64px">G3</div><div class="t" style="left:608px;top:64px">B3</div><div class="t" style="left:736px;top:64px">A3</div><div class="t" style="left:800px;top:64px">B3</div><div class="t" style="left:992px;top:64px">A3</div><div class="t" style="left:1056px;top:64px">B3</div><div class="t" style="left:1248px;top:64px">D&#35;4</div><div class="t" style="left:32px;top:128px">B4</div><div class="t" style="left:96px;top:128px">G4</div><div class="t" style="left:160px;top:128px">A4</div><div class="t" style="left:224px;top:128px">F&#35;4</div><div class="t" style="left:288px;top:128px">G4</div><div class="t" style="left:352px;top:128px">G4</div><div class="t" style="left:416px;top:128px">F&#35;4</div><div class="t" style="left:480px;top:128px">G4</div><div class="t" style="left:608px;top:128px">G5</div><div class="t" style="left:672px;top:128px">F&#35;5</div><div class="t" style="left:736px;top:128px">D5</div><div class="t" style="left:800px;top:128px">E5</div><div class="t" style="left:864px;top:128px">B4</div><div class="t" style="left:928px;top:128px">D5</div><div class="t" style="left:992px;top:128px">A4</div><div class="t" style="left:1056px;top:128px">B4</div><div class="t" style="left:1120px;top:128px">C5</div><div class="t" style="left:1184px;top:128px">C5</div><div class="t" style="left:1248px;top:128px">C5</div><div class="t" style="left:32px;top:160px">B4</div><div class="t" style="left:96px;top:160px">G4</div><div class="t" style="left:160px;top:160px">A4</div><div class="t" style="left:224px;top:160px">F&#35;4</div><div class="t" style="left:288px;top:160px">G4</div><div class="t" style="left:352px;top:160px">G4</div><div class="t" style="left:416px;top:160px">F&#35;4</div><div class="t" style="left:480px;top:160px">G4</div><div class="t" style="left:608px;top:160px">G5</div><div class="t" style="left:672px;top:160px">F&#35;5</div><div class="t" style="left:736px;top:160px">D5</div><div class="t" style="left:800px;top:160px">E5</div><div class="t" style="left:864px;top:160px">B4</div><div class="t" style="left:928px;top:160px">D5</div><div class="t" style="left:992px;top:160px">A4</div><div class="t" style="left:1056px;top:160px">B4</div><div class="t" style="left:1120px;top:160px">F&#35;4</div><div class="t" style="left:1184px;top:160px">F&#35;4</div><div class="t" style="left:1248px;top:160px">F&#35;4</div><div class="t" style="left:32px;top:192px">B4</div><div class="t" style="left:96px;top:192px">G4</div><div class="t" style="left:160px;top:192px">A4</div><div class="t" style="left:224px;top:192px">F&#35;4</div><div class="t" style="left:288px;top:192px">G4</div><div class="t" style="left:352px;top:192px">G4</div><div class="t" style="left:416px;top:192px">F&#35;4</div><div class="t" style="left:480px;top:192px">G4</div><div class="t" style="left:608px;top:192px">G5</div><div class="t" style="left:672px;top:192px">F&#35;5</div><div class="t" style="left:736px;top:192px">D5</div><div class="t" style="left:800px;top:192px">E5</div><div class="t" style="left:864px;top:192px">B4</div><div class="t" style="left:928px;top:192px">D5</div><div class="t" style="left:992px;top:192px">A4</div><div class="t" style="left:1056px;top:192px">B4</div><div class="t" style="left:1120px;top:192px">C5</div><div class="t" style="left:1184px;top:192px">C5</div><div class="t" style="left:1248px;top:192px">C5</div><div class="t" style="left:32px;top:256px">G4</div><div class="t" style="left:96px;top:256px">D4</div><div class="t" style="left:160px;top:256px">D4</div><div class="t" style="left:224px;top:256px">D4</div><div class="t" style="left:288px;top:256px">D4</div><div class="t" style="left:352px;top:256px">D4</div><div class="t" style="left:416px;top:256px">D4</div><div class="t" style="left:480px;top:256px">D4</div><div class="t" style="left:544px;top:256px">D4</div><div class="t" style="left:608px;top:256px">A4</div><div class="t" style="left:672px;top:256px">A4</div><div class="t" style="left:736px;top:256px">A4</div><div class="t" style="left:800px;top:256px">A4</div><div class="t" style="left:864px;top:256px">A4</div><div class="t" style="left:928px;top:256px">A4</div><div class="t" style="left:992px;top:256px">A4</div><div class="t" style="left:1056px;top:256px">A4</div><div class="t" style="left:1120px;top:256px">F&#35;4</div><div class="t" style="left:1184px;top:256px">F&#35;4</div><div class="t" style="left:1248px;top:256px">F&#35;4</div><div class="t" style="left:32px;top:288px">E4</div><div class="t" style="left:96px;top:288px">B3</div><div class="t" style="left:160px;top:288px">B3</div><div class="t" style="left:224px;top:288px">B3</div><div class="t" style="left:288px;top:288px">B3</div><div class="t" style="left:352px;top:288px">B3</div><div class="t" style="left:416px;top:288px">B3</div><div class="t" style="left:480px;top:288px">B3</div><div class="t" style="left:544px;top:288px">B3</div><div class="t" style="left:608px;top:288px">F&#35;4</div><div class="t" style="left:672px;top:288px">F&#35;4</div><div class="t" style="left:736px;top:288px">F&#35;4</div><div class="t" style="left:800px;top:288px">F&#35;4</div><div class="t" style="left:864px;top:288px">F&#35;4</div><div class="t" style="left:928px;top:288px">F&#35;4</div><div class="t" style="left:992px;top:288px">F&#35;4</div><div class="t" style="left:1056px;top:288px">F&#35;4</div><div class="t" style="left:1120px;top:288px">D&#35;4</div><div class="t" style="left:1184px;top:288px">D&#35;4</div><div class="t" style="left:1248px;top:288px">D&#35;4</div><div class="t" style="left:32px;top:320px">C4</div><div class="t" style="left:96px;top:320px">G3</div><div class="t" style="left:160px;top:320px">G3</div><div class="t" style="left:224px;top:320px">G3</div><div class="t" style="left:288px;top:320px">G3</div><div class="t" style="left:352px;top:320px">G3</div><div class="t" style="left:416px;top:320px">G3</div><div class="t" style="left:480px;top:320px">G3</div><div class="t" style="left:544px;top:320px">G3</div><div class="t" style="left:608px;top:320px">D4</div><div class="t" style="left:672px;top:320px">D4</div><div class="t" style="left:736px;top:320px">D4</div><div class="t" style="left:800px;top:320px">D4</div><div class="t" style="left:864px;top:320px">D4</div><div class="t" style="left:928px;top:320px">D4</div><div class="t" style="left:992px;top:320px">D4</div><div class="t" style="left:1056px;top:320px">D4</div><div class="t" style="left:1120px;top:320px">B3</div><div class="t" style="left:1184px;top:320px">B3</div><div class="t" style="left:1248px;top:320px">B3</div><div class="t" style="left:32px;top:384px">C4</div><div class="t" style="left:96px;top:384px">G3</div><div class="t" style="left:160px;top:384px">G3</div><div class="t" style="left:224px;top:384px">G3</div><div class="t" style="left:288px;top:384px">G3</div><div class="t" style="left:352px;top:384px">G3</div><div class="t" style="left:416px;top:384px">G3</div><div class="t" style="left:480px;top:384px">G3</div><div class="t" style="left:544px;top:384px">G3</div><div class="t" style="left:608px;top:384px">D4</div><div class="t" style="left:672px;top:384px">D4</div><div class="t" style="left:736px;top:384px">D4</div><div class="t" style="left:800px;top:384px">D4</div><div class="t" style="left:864px;top:384px">D4</div><div class="t" style="left:928px;top:384px">D4</div><div class="t" style="left:992px;top:384px">D4</div><div class="t" style="left:1056px;top:384px">D4</div><div class="t" style="left:1120px;top:384px">B3</div><div class="t" style="left:1184px;top:384px">B3</div><div class="t" style="left:1248px;top:384px">B3</div><div class="t" style="left:32px;top:416px">C4</div><div class="t" style="left:96px;top:416px">G3</div><div class="t" style="left:160px;top:416px">G3</div><div class="t" style="left:224px;top:416px">G3</div><div class="t" style="left:288px;top:416px">G3</div><div class="t" style="left:352px;top:416px">G3</div><div class="t" style="left:416px;top:416px">G3</div><div class="t" style="left:480px;top:416px">G3</div><div class="t" style="left:544px;top:416px">G3</div><div class="t" style="left:608px;top:416px">D4</div><div class="t" style="left:672px;top:416px">D4</div><div class="t" style="left:736px;top:416px">D4</div><div class="t" style="left:800px;top:416px">D4</div><div class="t" style="left:864px;top:416px">D4</div><div class="t" style="left:928px;top:416px">D4</div><div class="t" style="left:992px;top:416px">D4</div><div class="t" style="left:1056px;top:416px">D4</div><div class="t" style="left:1120px;top:416px">B3</div><div class="t" style="left:1184px;top:416px">B3</div><div class="t" style="left:1248px;top:416px">B3</div><div class="t" style="left:96px;top:480px">C4</div><div class="t" style="left:160px;top:480px">C4</div><div class="t" style="left:352px;top:480px">C4</div><div class="t" style="left:416px;top:480px">C4</div><div class="t" style="left:608px;top:480px">C4</div><div class="t" style="left:672px;top:480px">C4</div><div class="t" style="left:864px;top:480px">C4</div><div class="t" style="left:928px;top:480px">C4</div><div class="t" style="left:1120px;top:480px">C4</div><div class="t" style="left:1248px;top:480px">C4</div><div class="t" style="left:224px;top:512px">C4</div><div class="t" style="left:320px;top:512px">C4</div><div class="t" style="left:384px;top:512px">C4</div><div class="t" style="left:480px;top:512px">C4</div><div class="t" style="left:736px;top:512px">C4</div><div class="t" style="left:832px;top:512px">C4</div><div class="t" style="left:896px;top:512px">C4</div><div class="t" style="left:992px;top:512px">C4</div><div class="t" style="left:1120px;top:512px">C4</div><div class="t" style="left:1152px;top:512px">C4</div><div class="t" style="left:1216px;top:512px">C4</div><div class="t" style="left:1248px;top:512px">C4</div><div class="t" style="left:96px;top:544px">C4</div><div class="t" style="left:224px;top:544px">C4</div><div class="t" style="left:352px;top:544px">C4</div><div class="t" style="left:480px;top:544px">C4</div><div class="t" style="left:608px;top:544px">C4</div><div class="t" style="left:736px;top:544px">C4</div><div class="t" style="left:864px;top:544px">C4</div><div class="t" style="left:992px;top:544px">C4</div><div class="t" style="left:96px;top:608px">G3</div><div class="t" style="left:288px;top:608px">G4</div><div class="t" style="left:416px;top:608px">A4</div><div class="t" style="left:480px;top:608px">B4</div><div class="t" style="left:608px;top:608px">E4</div><div class="t" style="left:672px;top:608px">G4</div><div class="t" style="left:736px;top:608px">F&#35;4</div><div class="t" style="left:800px;top:608px">G4</div><div class="t" style="left:864px;top:608px">A4</div><div class="t" style="left:928px;top:608px">G4</div><div class="t" style="left:992px;top:608px">A4</div><div class="t" style="left:1056px;top:608px">B4</div><div class="t" style="left:1120px;top:608px">D&#35;5</div><div class="t" style="left:1184px;top:608px">B4</div><div class="t" style="left:1248px;top:608px">D&#35;5</div>
</div></body></html>
